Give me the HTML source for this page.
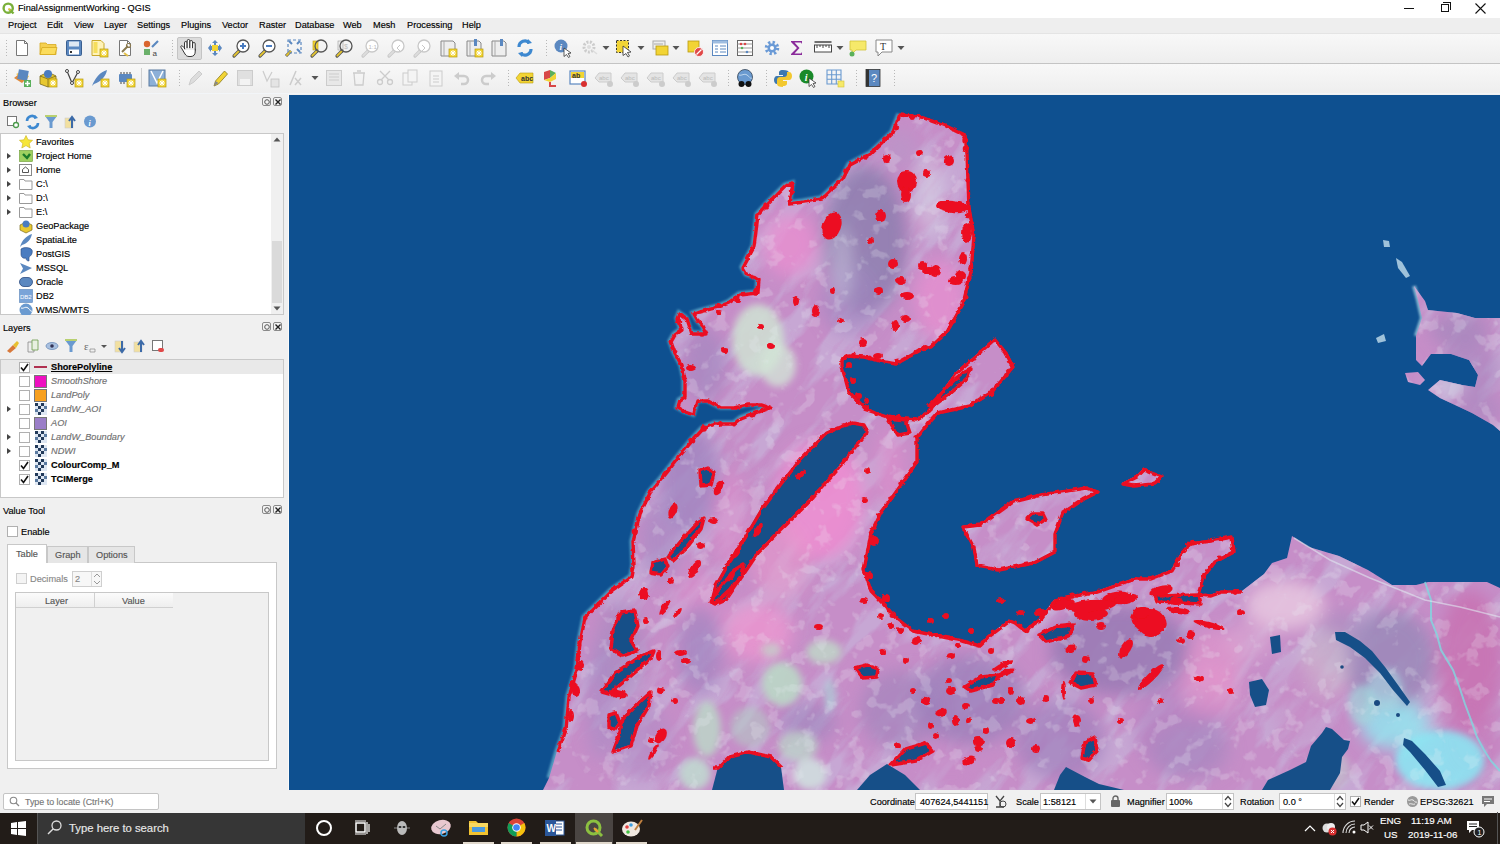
<!DOCTYPE html><html><head><meta charset="utf-8"><style>
*{margin:0;padding:0;box-sizing:border-box}
html,body{width:1500px;height:844px;overflow:hidden;background:#f0f0f0;font-family:"Liberation Sans",sans-serif;font-size:9.2px;color:#000;position:relative}
.a{position:absolute}
.ic{position:absolute;overflow:visible}
.t{position:absolute;white-space:nowrap;font-size:9.2px;line-height:11px;-webkit-text-stroke:0.15px currentColor}
.grip{position:absolute;width:3px;height:18px;background-image:radial-gradient(#b8b8b8 0.6px,transparent 0.7px);background-size:3px 3px}
#title{left:0;top:0;width:1500px;height:18px;background:#fff}
#menu{left:0;top:18px;width:1500px;height:15px;background:#eeeeee}
#tb1{left:0;top:33px;width:1500px;height:30px;background:linear-gradient(#f8f8f8,#eeeeee);border-top:1px solid #e4e4e4}
#tb2{left:0;top:63px;width:1500px;height:31px;background:linear-gradient(#f8f8f8,#eeeeee);border-top:1px solid #c4c4c4;border-bottom:1px solid #f2f5f8}
#map{left:289px;top:95px;width:1211px;height:695px;background:#0f4f8d;overflow:hidden}
#taskbar{left:0;top:813px;width:1500px;height:31px;background:#221c18}
.box{position:absolute;background:#fff;border:1px solid #c8c8c8}
.cb{position:absolute;width:11px;height:11px;background:#fff;border:1px solid #b0b0b0}
.dockbtn{position:absolute;width:9px;height:9px;border:1px solid #8a8a8a;border-radius:2px;background:#f4f4f4}
.arrow{position:absolute;width:0;height:0;border-top:3.5px solid transparent;border-bottom:3.5px solid transparent;border-left:4px solid #444}
</style></head><body><div id="title" class="a"><svg class="ic" style="left:2px;top:2px" width="13" height="13" viewBox="0 0 13 13"><circle cx="6.2" cy="6.2" r="4.6" fill="none" stroke="#7ab03a" stroke-width="2.4"/><path d="M7 7l4.5 4.5" stroke="#7ab03a" stroke-width="2.4"/><path d="M6.5 6.5l2 2" stroke="#e8c030" stroke-width="1.5"/></svg><span class="t" style="left:18px;top:3px">FinalAssignmentWorking - QGIS</span><div class="a" style="left:1404px;top:8px;width:10px;height:1px;background:#111"></div><div class="a" style="left:1441px;top:4px;width:8px;height:8px;border:1px solid #111;background:#fff"></div><div class="a" style="left:1443px;top:2px;width:8px;height:8px;border-top:1px solid #111;border-right:1px solid #111"></div><svg class="ic" style="left:1475px;top:3px" width="11" height="11"><path d="M0.5 0.5l10 10M10.5 0.5l-10 10" stroke="#111" stroke-width="1.1"/></svg></div><div id="menu" class="a"><span class="t" style="left:8px;top:2px">Project</span><span class="t" style="left:47px;top:2px">Edit</span><span class="t" style="left:74px;top:2px">View</span><span class="t" style="left:104px;top:2px">Layer</span><span class="t" style="left:137px;top:2px">Settings</span><span class="t" style="left:181px;top:2px">Plugins</span><span class="t" style="left:222px;top:2px">Vector</span><span class="t" style="left:259px;top:2px">Raster</span><span class="t" style="left:295px;top:2px">Database</span><span class="t" style="left:343px;top:2px">Web</span><span class="t" style="left:373px;top:2px">Mesh</span><span class="t" style="left:407px;top:2px">Processing</span><span class="t" style="left:462px;top:2px">Help</span></div><div id="tb1" class="a"></div><div id="tb2" class="a"></div><div class="a" style="left:177px;top:37px;width:25px;height:23px;background:#dcdcdc;border:1px solid #c4c4c4;border-radius:2px"></div><svg class="ic" style="left:12.0px;top:38.0px" width="20" height="20" viewBox="0 0 20 20"><path d="M4.5 2.5h8l3 3v12h-11z" fill="#fff" stroke="#777"/><path d="M12.5 2.5v3h3" fill="none" stroke="#777"/></svg><svg class="ic" style="left:38.0px;top:38.0px" width="20" height="20" viewBox="0 0 20 20"><path d="M2 5h6l1.5 1.5H18v10H2z" fill="#f5d050" stroke="#d6a920" stroke-width="0.8"/><path d="M2 16.5l2-7h15l-2 7z" fill="#fbdc5c" stroke="#d6a920" stroke-width="0.8"/></svg><svg class="ic" style="left:64.0px;top:38.0px" width="20" height="20" viewBox="0 0 20 20"><rect x="2.5" y="2.5" width="15" height="15" rx="1" fill="#5b88c0" stroke="#3a5f90"/><rect x="5" y="3.5" width="10" height="5" fill="#dfe8f2"/><rect x="5" y="11.5" width="10" height="5" fill="#fff"/><rect x="6" y="13" width="2" height="2" fill="#333"/></svg><svg class="ic" style="left:89.0px;top:38.0px" width="20" height="20" viewBox="0 0 20 20"><path d="M3 2.5h9l3 3v12H3z" fill="#fff3b8" stroke="#c9a82a"/><rect x="4.5" y="4" width="4" height="11" fill="#f2d434" opacity=".7"/><rect x="11" y="11" width="8" height="8" fill="#f2d434" stroke="#b89a10" stroke-width="0.7"/><path d="M15 12.2v5.6M12.2 15h5.6M13 13l4 4M17 13l-4 4" stroke="#fff" stroke-width="1"/></svg><svg class="ic" style="left:115.0px;top:38.0px" width="20" height="20" viewBox="0 0 20 20"><path d="M4.5 2.5h8l3 3v12h-11z" fill="#fff" stroke="#777"/><path d="M12.5 2.5v3h3" fill="none" stroke="#777"/><path d="M7 14l6-6" stroke="#8a7a50" stroke-width="2"/><circle cx="13.5" cy="7.5" r="2" fill="none" stroke="#8a7a50" stroke-width="1.2"/><path d="M9 15l4 3" stroke="#e3c04a" stroke-width="2"/></svg><svg class="ic" style="left:141.0px;top:38.0px" width="20" height="20" viewBox="0 0 20 20"><circle cx="6" cy="6" r="3.2" fill="#d9652f"/><path d="M11 9l6-6" stroke="#5b88c0" stroke-width="2.2"/><rect x="3" y="11" width="6" height="6" fill="#6ab06a"/><text x="11.5" y="17.5" font-size="8" fill="#444" font-family="Liberation Sans">a</text></svg><svg class="ic" style="left:179.0px;top:38.0px" width="20" height="20" viewBox="0 0 20 20"><g fill="#fff" stroke="#222" stroke-width="0.9"><rect x="5.5" y="3.5" width="2.6" height="9" rx="1.3"/><rect x="8.2" y="1.5" width="2.6" height="10" rx="1.3"/><rect x="10.9" y="2.5" width="2.6" height="10" rx="1.3"/><rect x="13.6" y="4.5" width="2.6" height="9" rx="1.3"/><path d="M5.5 10l-2-2c-1-.8-2.2.3-1.5 1.3L6 16c1 1.5 2 2.5 4 2.5h2c2.5 0 4.2-2 4.2-4.5V11H5.5z"/></g><path d="M6.2 11h9.3" stroke="#fff" stroke-width="1.6"/></svg><svg class="ic" style="left:205.0px;top:38.0px" width="20" height="20" viewBox="0 0 20 20"><path d="M10 2l3 3h-2v3h3V6l3 4-3 4v-2h-3v3h2l-3 3-3-3h2v-3H6v2l-3-4 3-4v2h3V5H7z" fill="#5b88c0"/><rect x="7" y="7" width="6" height="6" fill="#f2d434"/></svg><svg class="ic" style="left:231.0px;top:38.0px" width="20" height="20" viewBox="0 0 20 20"><path d="M3 18l5-5" stroke="#555" stroke-width="3.2" stroke-linecap="round"/><path d="M3.3 17.7l4.5-4.5" stroke="#e8c830" stroke-width="1.8" stroke-linecap="round"/><circle cx="12" cy="8" r="6" fill="#fff" stroke="#555" stroke-width="1.3"/><path d="M9 8h6M12 5v6" stroke="#4a7cc0" stroke-width="2"/></svg><svg class="ic" style="left:257.0px;top:38.0px" width="20" height="20" viewBox="0 0 20 20"><path d="M3 18l5-5" stroke="#555" stroke-width="3.2" stroke-linecap="round"/><path d="M3.3 17.7l4.5-4.5" stroke="#e8c830" stroke-width="1.8" stroke-linecap="round"/><circle cx="12" cy="8" r="6" fill="#fff" stroke="#555" stroke-width="1.3"/><path d="M9 8h6" stroke="#4a7cc0" stroke-width="2"/></svg><svg class="ic" style="left:283.0px;top:38.0px" width="20" height="20" viewBox="0 0 20 20"><path d="M3 18l5-5" stroke="#555" stroke-width="3"/><path d="M3.3 17.7l4.5-4.5" stroke="#e8c830" stroke-width="1.8"/><rect x="5" y="2" width="13" height="13" fill="none" stroke="#5b88c0" stroke-width="1.2" stroke-dasharray="3 2"/><path d="M6 3l3 3M17 3l-3 3M17 14l-3-3" stroke="#5b88c0" stroke-width="2"/></svg><svg class="ic" style="left:309.0px;top:38.0px" width="20" height="20" viewBox="0 0 20 20"><rect x="4" y="3" width="5" height="9" fill="#f2d434" stroke="#b89a10" stroke-width=".6"/><path d="M3 18l5-5" stroke="#555" stroke-width="3.2" stroke-linecap="round"/><path d="M3.3 17.7l4.5-4.5" stroke="#e8c830" stroke-width="1.8" stroke-linecap="round"/><circle cx="12" cy="8" r="6" fill="none" stroke="#555" stroke-width="1.3"/></svg><svg class="ic" style="left:334.0px;top:38.0px" width="20" height="20" viewBox="0 0 20 20"><rect x="4" y="3" width="5" height="9" fill="#eee" stroke="#999" stroke-width=".6"/><path d="M3 18l5-5" stroke="#555" stroke-width="3.2" stroke-linecap="round"/><path d="M3.3 17.7l4.5-4.5" stroke="#e8c830" stroke-width="1.8" stroke-linecap="round"/><circle cx="12" cy="8" r="6" fill="none" stroke="#555" stroke-width="1.3"/><text x="10" y="11" font-size="7" fill="#bbb">$</text></svg><svg class="ic" style="left:360.0px;top:38.0px" width="20" height="20" viewBox="0 0 20 20"><path d="M3 18l5-5" stroke="#c8c8c8" stroke-width="3.2" stroke-linecap="round"/><path d="M3.3 17.7l4.5-4.5" stroke="#ddd" stroke-width="1.8" stroke-linecap="round"/><circle cx="12" cy="8" r="6" fill="#fff" stroke="#c8c8c8" stroke-width="1.3"/><text x="8.5" y="10.5" font-size="6" fill="#bbb" font-family="Liberation Sans">1:1</text></svg><svg class="ic" style="left:386.0px;top:38.0px" width="20" height="20" viewBox="0 0 20 20"><path d="M3 18l5-5" stroke="#c8c8c8" stroke-width="3.2" stroke-linecap="round"/><path d="M3.3 17.7l4.5-4.5" stroke="#ddd" stroke-width="1.8" stroke-linecap="round"/><circle cx="12" cy="8" r="6" fill="#fff" stroke="#c8c8c8" stroke-width="1.3"/><path d="M14 7l-3 3 3 3" stroke="#c8c8c8" fill="none"/></svg><svg class="ic" style="left:412.0px;top:38.0px" width="20" height="20" viewBox="0 0 20 20"><path d="M3 18l5-5" stroke="#c8c8c8" stroke-width="3.2" stroke-linecap="round"/><path d="M3.3 17.7l4.5-4.5" stroke="#ddd" stroke-width="1.8" stroke-linecap="round"/><circle cx="12" cy="8" r="6" fill="#fff" stroke="#c8c8c8" stroke-width="1.3"/><path d="M10 7l3 3-3 3" stroke="#c8c8c8" fill="none"/></svg><svg class="ic" style="left:438.0px;top:38.0px" width="20" height="20" viewBox="0 0 20 20"><path d="M3 3h12l2 2v13H3z" fill="#eee" stroke="#888"/><path d="M6 3v15" stroke="#aaa"/><rect x="11" y="11" width="8" height="8" fill="#f2d434" stroke="#b89a10" stroke-width="0.7"/><path d="M15 12.2v5.6M12.2 15h5.6M13 13l4 4M17 13l-4 4" stroke="#fff" stroke-width="1"/></svg><svg class="ic" style="left:464.0px;top:38.0px" width="20" height="20" viewBox="0 0 20 20"><path d="M3 3h12l2 2v13H3z" fill="#eee" stroke="#888"/><path d="M6 3v15" stroke="#aaa"/><rect x="10" y="1" width="3" height="7" fill="#5b88c0"/><rect x="11" y="11" width="8" height="8" fill="#f2d434" stroke="#b89a10" stroke-width="0.7"/><path d="M15 12.2v5.6M12.2 15h5.6M13 13l4 4M17 13l-4 4" stroke="#fff" stroke-width="1"/></svg><svg class="ic" style="left:489.0px;top:38.0px" width="20" height="20" viewBox="0 0 20 20"><path d="M3 3h12l2 2v13H3z" fill="#eee" stroke="#888"/><path d="M6 3v15" stroke="#aaa"/><rect x="11" y="1" width="3" height="7" fill="#5b88c0"/></svg><svg class="ic" style="left:515.0px;top:38.0px" width="20" height="20" viewBox="0 0 20 20"><path d="M4 9a6 6 0 0 1 10.5-4" stroke="#3d88d0" stroke-width="3.2" fill="none"/><path d="M13 1l4 4-5 1z" fill="#3d88d0"/><path d="M16 11a6 6 0 0 1-10.5 4" stroke="#3d88d0" stroke-width="3.2" fill="none"/><path d="M7 19l-4-4 5-1z" fill="#3d88d0"/></svg><svg class="ic" style="left:553.0px;top:38.0px" width="20" height="20" viewBox="0 0 20 20"><circle cx="8" cy="8" r="6.5" fill="#5b88c0"/><text x="6.4" y="12" font-size="9" font-style="italic" font-weight="bold" fill="#fff" font-family="Liberation Serif">i</text><path d="M11 10l7 5-3 .5 2 3-1.5 1-2-3-2.5 2z" fill="#fff" stroke="#333" stroke-width=".8"/></svg><svg class="ic" style="left:580.0px;top:38.0px" width="20" height="20" viewBox="0 0 20 20"><circle cx="9" cy="9" r="5" fill="none" stroke="#ccc" stroke-width="3" stroke-dasharray="2 1.4"/><circle cx="9" cy="9" r="2" fill="#ddd"/><path d="M12 12l5 4" stroke="#ddd" stroke-width="1.5"/></svg><svg class="ic" style="left:614.0px;top:38.0px" width="20" height="20" viewBox="0 0 20 20"><rect x="2.5" y="2.5" width="12" height="12" fill="#f2d434" stroke="#333" stroke-width="1" stroke-dasharray="2 1.5"/><path d="M9 8l8 6-3.5.5 2 3.5-1.5 1-2-3.5-3 2z" fill="#fff" stroke="#333" stroke-width=".8"/></svg><svg class="ic" style="left:650.0px;top:38.0px" width="20" height="20" viewBox="0 0 20 20"><rect x="3" y="3" width="12" height="8" fill="#eee" stroke="#aaa"/><rect x="6" y="8" width="12" height="9" fill="#f2d434" stroke="#b89a10" stroke-width=".8"/><path d="M4 6h9" stroke="#aaa"/></svg><svg class="ic" style="left:685.0px;top:38.0px" width="20" height="20" viewBox="0 0 20 20"><rect x="3" y="3" width="11" height="11" fill="#f2d434" stroke="#b89a10" stroke-width=".8"/><circle cx="14" cy="14" r="4.5" fill="#e04848" stroke="#fff" stroke-width=".8"/><path d="M11.5 16.5l5-5" stroke="#fff" stroke-width="1.3"/></svg><svg class="ic" style="left:710.0px;top:38.0px" width="20" height="20" viewBox="0 0 20 20"><rect x="2.5" y="2.5" width="15" height="15" fill="#fff" stroke="#5b88c0"/><rect x="2.5" y="2.5" width="15" height="3" fill="#9fbde0"/><path d="M5 8h3M10 8h6M5 11h3M10 11h6M5 14h3M10 14h6" stroke="#5b88c0"/></svg><svg class="ic" style="left:735.0px;top:38.0px" width="20" height="20" viewBox="0 0 20 20"><rect x="2.5" y="2.5" width="15" height="15" fill="#fff" stroke="#666"/><path d="M2.5 6h15M2.5 10h15M2.5 14h15" stroke="#999"/><circle cx="6" cy="6" r="1.3" fill="#d84848"/><circle cx="10" cy="6" r="1.3" fill="#d84848"/><circle cx="7" cy="10" r="1.3" fill="#5bb05b"/><circle cx="12" cy="14" r="1.3" fill="#5b88c0"/></svg><svg class="ic" style="left:762.0px;top:38.0px" width="20" height="20" viewBox="0 0 20 20"><circle cx="10" cy="10" r="5.5" fill="none" stroke="#6a9ad6" stroke-width="3.5" stroke-dasharray="2.2 2.1"/><circle cx="10" cy="10" r="4.5" fill="#6a9ad6"/><circle cx="10" cy="10" r="2" fill="#fff"/></svg><svg class="ic" style="left:787.0px;top:38.0px" width="20" height="20" viewBox="0 0 20 20"><path d="M4 3h11v3l-1-1.5H7.5l5 5.5-5 5.5H14l1-1.5v3H4v-1l6-6-6-6z" fill="#8a2a9a"/></svg><svg class="ic" style="left:813.0px;top:38.0px" width="20" height="20" viewBox="0 0 20 20"><rect x="1.5" y="7" width="17" height="7" fill="#fff" stroke="#444"/><path d="M4 7v3M7 7v2M10 7v3M13 7v2M16 7v3" stroke="#444"/><path d="M1.5 4h17" stroke="#444" stroke-width="1.5"/></svg><svg class="ic" style="left:848.0px;top:38.0px" width="20" height="20" viewBox="0 0 20 20"><path d="M2 3h16v9H8l-4 4v-4H2z" fill="#f6e96a" stroke="#d2c33a" stroke-width=".8"/><circle cx="4" cy="16" r="2.5" fill="#5bb05b"/></svg><svg class="ic" style="left:874.0px;top:38.0px" width="20" height="20" viewBox="0 0 20 20"><path d="M2 2h16v12H8l-4 4v-4H2z" fill="#fff" stroke="#888"/><text x="6" y="11.5" font-size="10" fill="#333" font-family="Liberation Serif">T</text></svg><svg class="ic" style="left:602px;top:45px" width="8" height="6"><path d="M0.5 1h7l-3.5 4z" fill="#555"/></svg><svg class="ic" style="left:637px;top:45px" width="8" height="6"><path d="M0.5 1h7l-3.5 4z" fill="#555"/></svg><svg class="ic" style="left:672px;top:45px" width="8" height="6"><path d="M0.5 1h7l-3.5 4z" fill="#555"/></svg><svg class="ic" style="left:836px;top:45px" width="8" height="6"><path d="M0.5 1h7l-3.5 4z" fill="#555"/></svg><svg class="ic" style="left:897px;top:45px" width="8" height="6"><path d="M0.5 1h7l-3.5 4z" fill="#555"/></svg><div class="grip" style="left:5px;top:39px"></div><div class="grip" style="left:171px;top:39px"></div><div class="grip" style="left:545px;top:39px"></div><svg class="ic" style="left:12.0px;top:68.0px" width="20" height="20" viewBox="0 0 20 20"><path d="M2 10l5-4 8 4-5 5z" fill="#e08a3a"/><path d="M4 6l5-2 8 4-3 5z" fill="#f2c14a"/><rect x="6" y="2" width="10" height="10" fill="#5b88c0" transform="rotate(10 11 7)"/><rect x="12" y="12" width="7" height="7" fill="#5bb05b"/><path d="M15.5 13v5M13 15.5h5" stroke="#fff" stroke-width="1.5"/></svg><svg class="ic" style="left:38.0px;top:68.0px" width="20" height="20" viewBox="0 0 20 20"><path d="M2 8l8-4 8 4v8l-8 3-8-3z" fill="#e8c830" stroke="#7a6a20" stroke-width=".8"/><path d="M2 8l8 3 8-3M10 11v8" stroke="#7a6a20" stroke-width=".8" fill="none"/><circle cx="10" cy="6" r="4" fill="#4a7cc0"/><rect x="11" y="11" width="8" height="8" fill="#f2d434" stroke="#b89a10" stroke-width="0.7"/><path d="M15 12.2v5.6M12.2 15h5.6M13 13l4 4M17 13l-4 4" stroke="#fff" stroke-width="1"/></svg><svg class="ic" style="left:64.0px;top:68.0px" width="20" height="20" viewBox="0 0 20 20"><path d="M3 3l5 12 6-11" stroke="#444" stroke-width="1.2" fill="none"/><circle cx="3" cy="3" r="1.5" fill="#fff" stroke="#444"/><circle cx="14" cy="4" r="1.5" fill="#fff" stroke="#444"/><circle cx="8" cy="15" r="1.5" fill="#fff" stroke="#444"/><rect x="11" y="11" width="8" height="8" fill="#f2d434" stroke="#b89a10" stroke-width="0.7"/><path d="M15 12.2v5.6M12.2 15h5.6M13 13l4 4M17 13l-4 4" stroke="#fff" stroke-width="1"/></svg><svg class="ic" style="left:90.0px;top:68.0px" width="20" height="20" viewBox="0 0 20 20"><path d="M2 18C5 10 10 4 17 2c-1 6-6 12-13 14" fill="#5b88c0"/><rect x="11" y="11" width="8" height="8" fill="#f2d434" stroke="#b89a10" stroke-width="0.7"/><path d="M15 12.2v5.6M12.2 15h5.6M13 13l4 4M17 13l-4 4" stroke="#fff" stroke-width="1"/></svg><svg class="ic" style="left:116.0px;top:68.0px" width="20" height="20" viewBox="0 0 20 20"><rect x="3" y="6" width="13" height="8" rx="1" fill="#5b88c0"/><path d="M5 4v2M8 4v2M11 4v2M14 4v2M5 14v2M8 14v2" stroke="#444"/><rect x="11" y="11" width="8" height="8" fill="#f2d434" stroke="#b89a10" stroke-width="0.7"/><path d="M15 12.2v5.6M12.2 15h5.6M13 13l4 4M17 13l-4 4" stroke="#fff" stroke-width="1"/></svg><svg class="ic" style="left:147.0px;top:68.0px" width="20" height="20" viewBox="0 0 20 20"><rect x="2" y="2" width="16" height="16" fill="#8cb0d8" stroke="#5b7aa0"/><path d="M4 3l6 12 6-12" stroke="#fff" stroke-width="1.5" fill="none"/><rect x="11" y="11" width="8" height="8" fill="#f2d434" stroke="#b89a10" stroke-width="0.7"/><path d="M15 12.2v5.6M12.2 15h5.6M13 13l4 4M17 13l-4 4" stroke="#fff" stroke-width="1"/></svg><svg class="ic" style="left:185.0px;top:68.0px" width="20" height="20" viewBox="0 0 20 20"><path d="M4 17l2-6 8-8 3 3-8 8z" fill="#ddd" stroke="#ccc"/></svg><svg class="ic" style="left:210.0px;top:68.0px" width="20" height="20" viewBox="0 0 20 20"><path d="M4 18l1.5-5 9-10 3 3-9 10z" fill="#f2d434" stroke="#8a7a20" stroke-width=".8"/><path d="M4 18l1.5-5 3 2z" fill="#888"/></svg><svg class="ic" style="left:235.0px;top:68.0px" width="20" height="20" viewBox="0 0 20 20"><rect x="2.5" y="2.5" width="15" height="15" fill="#e0e0e0" stroke="#ccc"/><rect x="5" y="11" width="10" height="6" fill="#f3f3f3"/></svg><svg class="ic" style="left:260.0px;top:68.0px" width="20" height="20" viewBox="0 0 20 20"><path d="M3 3l4 10 5-9" stroke="#ccc" stroke-width="1.2" fill="none"/><rect x="11" y="11" width="8" height="8" fill="#e4e4e4" stroke="#bbb" stroke-width="0.7"/></svg><svg class="ic" style="left:287.0px;top:68.0px" width="20" height="20" viewBox="0 0 20 20"><path d="M3 17l6-14M8 10l6 7M14 10l-6 7" stroke="#ccc" stroke-width="1.5"/></svg><svg class="ic" style="left:324.0px;top:68.0px" width="20" height="20" viewBox="0 0 20 20"><rect x="2.5" y="2.5" width="15" height="15" fill="#e8e8e8" stroke="#ccc"/><path d="M5 6h10M5 9h10M5 12h10" stroke="#ccc"/></svg><svg class="ic" style="left:349.0px;top:68.0px" width="20" height="20" viewBox="0 0 20 20"><path d="M4 5h12M8 3h4M5 5l1 12h8l1-12" fill="none" stroke="#ccc" stroke-width="1.3"/></svg><svg class="ic" style="left:375.0px;top:68.0px" width="20" height="20" viewBox="0 0 20 20"><circle cx="5" cy="14" r="2.5" fill="none" stroke="#ccc" stroke-width="1.3"/><circle cx="15" cy="14" r="2.5" fill="none" stroke="#ccc" stroke-width="1.3"/><path d="M6 12l9-9M14 12L5 3" stroke="#ccc" stroke-width="1.3"/></svg><svg class="ic" style="left:400.0px;top:68.0px" width="20" height="20" viewBox="0 0 20 20"><rect x="3" y="5" width="9" height="12" fill="#f4f4f4" stroke="#ccc"/><rect x="8" y="2" width="9" height="12" fill="#f4f4f4" stroke="#ccc"/></svg><svg class="ic" style="left:426.0px;top:68.0px" width="20" height="20" viewBox="0 0 20 20"><rect x="4" y="3" width="12" height="15" fill="#f4f4f4" stroke="#ccc"/><path d="M7 8h6M7 11h6M7 14h6" stroke="#ccc"/></svg><svg class="ic" style="left:452.0px;top:68.0px" width="20" height="20" viewBox="0 0 20 20"><path d="M5 8h7a4 4 0 0 1 0 8H9" stroke="#ccc" stroke-width="2.5" fill="none"/><path d="M2 8l5-4v8z" fill="#ccc"/></svg><svg class="ic" style="left:478.0px;top:68.0px" width="20" height="20" viewBox="0 0 20 20"><path d="M15 8H8a4 4 0 0 0 0 8h3" stroke="#ccc" stroke-width="2.5" fill="none"/><path d="M18 8l-5-4v8z" fill="#ccc"/></svg><svg class="ic" style="left:515.0px;top:68.0px" width="20" height="20" viewBox="0 0 20 20"><path d="M1 10l4-5h13v10H5z" fill="#f2d434" stroke="#b89a10" stroke-width=".6"/><text x="6" y="12.5" font-size="7" font-weight="bold" fill="#333" font-family="Liberation Sans">abc</text></svg><svg class="ic" style="left:541.0px;top:68.0px" width="20" height="20" viewBox="0 0 20 20"><path d="M3 4l6-2 0 8-6 2z" fill="#d84848"/><path d="M9 2l6 3-6 5z" fill="#5bb05b"/><path d="M3 12l6-2 6-5v6l-6 3z" fill="#f2d434"/><path d="M9 14v4h6" stroke="#d84848" stroke-width="2" fill="none"/></svg><svg class="ic" style="left:568.0px;top:68.0px" width="20" height="20" viewBox="0 0 20 20"><rect x="2" y="3" width="15" height="13" fill="#fff" stroke="#5b88c0" stroke-width="1.2"/><rect x="3" y="4" width="13" height="6" fill="#f2d434"/><text x="4" y="10" font-size="7" font-weight="bold" fill="#333" font-family="Liberation Sans">ab</text><circle cx="16" cy="16" r="3" fill="#d83030"/></svg><svg class="ic" style="left:594.0px;top:68.0px" width="20" height="20" viewBox="0 0 20 20"><path d="M1 10l4-5h12v9H5z" fill="#e4e4e4" stroke="#ccc"/><text x="5" y="12" font-size="6" fill="#bbb" font-family="Liberation Sans">abc</text><circle cx="16" cy="16" r="3" fill="#ccc"/></svg><svg class="ic" style="left:620.0px;top:68.0px" width="20" height="20" viewBox="0 0 20 20"><path d="M1 10l4-5h12v9H5z" fill="#e4e4e4" stroke="#ccc"/><text x="5" y="12" font-size="6" fill="#bbb" font-family="Liberation Sans">abc</text><circle cx="16" cy="16" r="3" fill="#ccc"/></svg><svg class="ic" style="left:646.0px;top:68.0px" width="20" height="20" viewBox="0 0 20 20"><path d="M1 10l4-5h12v9H5z" fill="#e4e4e4" stroke="#ccc"/><text x="5" y="12" font-size="6" fill="#bbb" font-family="Liberation Sans">abc</text><circle cx="16" cy="16" r="3" fill="#ccc"/></svg><svg class="ic" style="left:672.0px;top:68.0px" width="20" height="20" viewBox="0 0 20 20"><path d="M1 10l4-5h12v9H5z" fill="#e4e4e4" stroke="#ccc"/><text x="5" y="12" font-size="6" fill="#bbb" font-family="Liberation Sans">abc</text><circle cx="16" cy="16" r="3" fill="#ccc"/></svg><svg class="ic" style="left:698.0px;top:68.0px" width="20" height="20" viewBox="0 0 20 20"><path d="M1 10l4-5h12v9H5z" fill="#e4e4e4" stroke="#ccc"/><text x="5" y="12" font-size="6" fill="#bbb" font-family="Liberation Sans">abc</text><circle cx="16" cy="16" r="3" fill="#ccc"/></svg><svg class="ic" style="left:735.0px;top:68.0px" width="20" height="20" viewBox="0 0 20 20"><circle cx="10" cy="9" r="7.5" fill="#6a9ad0" stroke="#345" stroke-width=".8"/><path d="M4 7c3 1 5-2 8 0s3 4 5 3" stroke="#c0d8ee" fill="none"/><circle cx="6.5" cy="16" r="3" fill="#111"/><circle cx="13.5" cy="16" r="3" fill="#111"/></svg><svg class="ic" style="left:773.0px;top:68.0px" width="20" height="20" viewBox="0 0 20 20"><path d="M10 2c-4 0-4 2-4 3v2h4v1H4c-2 0-3 2-3 4s1 4 3 4h2v-2c0-2 1-3 3-3h4c1.5 0 3-1 3-3V5c0-2-2-3-6-3z" fill="#3c78b0"/><path d="M10 18c4 0 4-2 4-3v-2h-4v-1h6c2 0 3-2 3-4s-1-4-3-4h-2v2c0 2-1 3-3 3H7c-1.5 0-3 1-3 3v4c0 2 2 3 6 3z" fill="#f2c830"/></svg><svg class="ic" style="left:798.0px;top:68.0px" width="20" height="20" viewBox="0 0 20 20"><circle cx="8.5" cy="8.5" r="7" fill="#1a8a2a"/><text x="6.7" y="13" font-size="10" font-style="italic" font-weight="bold" fill="#fff" font-family="Liberation Serif">i</text><path d="M11 10l7 5-3 .5 2 3-1.5 1-2-3-2.5 2z" fill="#fff" stroke="#333" stroke-width=".8"/></svg><svg class="ic" style="left:825.0px;top:68.0px" width="20" height="20" viewBox="0 0 20 20"><path d="M2 2h14v14H2zM2 6.7h14M2 11.3h14M6.7 2v14M11.3 2v14" stroke="#6a9ad0" fill="none" stroke-width="1.1"/><rect x="13" y="13" width="6" height="6" fill="#f6e96a" stroke="#d2c33a" stroke-width=".6"/></svg><svg class="ic" style="left:863.0px;top:68.0px" width="20" height="20" viewBox="0 0 20 20"><rect x="3" y="1.5" width="14" height="17" fill="#5b88c0" stroke="#333" stroke-width=".8"/><rect x="3" y="1.5" width="3" height="17" fill="#333"/><text x="8" y="14" font-size="11" fill="#fff" font-family="Liberation Sans">?</text></svg><svg class="ic" style="left:311px;top:75px" width="8" height="6"><path d="M0.5 1h7l-3.5 4z" fill="#555"/></svg><div class="grip" style="left:5px;top:69px"></div><div class="grip" style="left:178px;top:69px"></div><div class="grip" style="left:507px;top:69px"></div><div class="grip" style="left:727px;top:69px"></div><div class="grip" style="left:765px;top:69px"></div><div class="grip" style="left:855px;top:69px"></div><div class="grip" style="left:893px;top:69px"></div><div class="a" style="left:141px;top:68px;width:1px;height:20px;background:#d0d0d0"></div><div class="a" style="left:0;top:94px;width:289px;height:696px;background:#f0f0f0"></div><div class="a" style="left:288px;top:94px;width:1px;height:696px;background:#fafafa"></div><span class="t" style="left:3px;top:97.5px">Browser</span><div class="dockbtn" style="left:262px;top:97px"></div><svg class="ic" style="left:263px;top:98px" width="8" height="8"><circle cx="4" cy="4" r="2.3" fill="none" stroke="#555" stroke-width="1"/></svg><div class="dockbtn" style="left:273px;top:97px"></div><svg class="ic" style="left:274px;top:98px" width="8" height="8"><path d="M1.5 1.5l5 5M6.5 1.5l-5 5" stroke="#222" stroke-width="1.4"/></svg><svg class="ic" style="left:5px;top:114px" width="100" height="16" viewBox="0 0 100 16"><rect x="2.5" y="2.5" width="9" height="9" fill="#fff" stroke="#777"/><circle cx="11" cy="11" r="2.5" fill="#fff" stroke="#4a9a4a" stroke-width="1.3"/><path d="M22 7a5 5 0 0 1 9-3" stroke="#3d88d0" stroke-width="2.6" fill="none"/><path d="M30 1l3 3-4 1z" fill="#3d88d0"/><path d="M33 9a5 5 0 0 1-9 3" stroke="#3d88d0" stroke-width="2.6" fill="none"/><path d="M25 15l-3-3 4-1z" fill="#3d88d0"/><path d="M40 2h12l-4.5 6v6h-3V8z" fill="#6a9ad0"/><path d="M40 2h12" stroke="#b8d070" stroke-width="2"/><rect x="60" y="4" width="8" height="10" fill="#f2e0a0" stroke="#ccc" stroke-width=".6"/><path d="M67 14V4M64 7l3-4 3 4" stroke="#3c6aa8" stroke-width="2" fill="none"/><circle cx="85" cy="7.5" r="6" fill="#6a9ad0"/><text x="83.6" y="11.5" font-size="8" font-style="italic" font-weight="bold" fill="#fff" font-family="Liberation Serif">i</text></svg><div class="box" style="left:0px;top:133px;width:284px;height:182px"></div><div class="a" style="left:271px;top:134px;width:12px;height:180px;background:#f0f0f0"></div><div class="a" style="left:272px;top:241px;width:10px;height:62px;background:#dadada"></div><svg class="ic" style="left:273px;top:137px" width="8" height="5"><path d="M0.5 4.5l3.5-4 3.5 4z" fill="#555"/></svg><svg class="ic" style="left:273px;top:306px" width="8" height="5"><path d="M0.5 .5l3.5 4 3.5-4z" fill="#555"/></svg><svg class="ic" style="left:19px;top:135px" width="14" height="14" viewBox="0 0 14 14"><path d="M7 0.5l2 4.3 4.6.5-3.4 3.1 1 4.6L7 10.6 2.8 13l1-4.6L.4 5.3 5 4.8z" fill="#f6e63a" stroke="#c8b020" stroke-width=".6"/></svg><span class="t" style="left:36px;top:136.5px">Favorites</span><div class="arrow" style="left:7px;top:152.5px"></div><svg class="ic" style="left:19px;top:149px" width="14" height="14" viewBox="0 0 14 14"><rect x=".5" y="1.5" width="13" height="11" fill="#9ed060" stroke="#6a9a30" stroke-width=".6"/><path d="M4 5l4 4 3-4" stroke="#1a7a2a" stroke-width="2.4" fill="none"/></svg><span class="t" style="left:36px;top:150.5px">Project Home</span><div class="arrow" style="left:7px;top:166.5px"></div><svg class="ic" style="left:19px;top:163px" width="14" height="14" viewBox="0 0 14 14"><rect x=".5" y="1.5" width="12" height="11" fill="#fff" stroke="#888"/><path d="M3.5 9.5v-3l3-2.5 3 2.5v3z" fill="none" stroke="#555"/></svg><span class="t" style="left:36px;top:164.5px">Home</span><div class="arrow" style="left:7px;top:180.5px"></div><svg class="ic" style="left:19px;top:177px" width="14" height="14" viewBox="0 0 14 14"><path d="M.5 2.5h4.5l1 1.5H13v8.5H.5z" fill="#fff" stroke="#999"/></svg><span class="t" style="left:36px;top:178.5px">C:\</span><div class="arrow" style="left:7px;top:194.5px"></div><svg class="ic" style="left:19px;top:191px" width="14" height="14" viewBox="0 0 14 14"><path d="M.5 2.5h4.5l1 1.5H13v8.5H.5z" fill="#fff" stroke="#999"/></svg><span class="t" style="left:36px;top:192.5px">D:\</span><div class="arrow" style="left:7px;top:208.5px"></div><svg class="ic" style="left:19px;top:205px" width="14" height="14" viewBox="0 0 14 14"><path d="M.5 2.5h4.5l1 1.5H13v8.5H.5z" fill="#fff" stroke="#999"/></svg><span class="t" style="left:36px;top:206.5px">E:\</span><svg class="ic" style="left:19px;top:219px" width="14" height="14" viewBox="0 0 14 14"><path d="M1 6l6-3 6 3v5l-6 3-6-3z" fill="#e8c830" stroke="#7a6a20" stroke-width=".7"/><circle cx="7" cy="5" r="3.5" fill="#4a7cc0"/></svg><span class="t" style="left:36px;top:220.5px">GeoPackage</span><svg class="ic" style="left:19px;top:233px" width="14" height="14" viewBox="0 0 14 14"><path d="M1 14C3 7 7 3 13 1c-1 5-4 9-10 11" fill="#5b88c0"/></svg><span class="t" style="left:36px;top:234.5px">SpatiaLite</span><svg class="ic" style="left:19px;top:247px" width="14" height="14" viewBox="0 0 14 14"><path d="M2 2c3-2 9-2 11 1 1 3-1 6-3 7v4c-2 0-3-1-3-3-3 1-5-1-5-4z" fill="#4a7cc0" stroke="#2a4a80" stroke-width=".6"/></svg><span class="t" style="left:36px;top:248.5px">PostGIS</span><svg class="ic" style="left:19px;top:261px" width="14" height="14" viewBox="0 0 14 14"><path d="M1 2l12 5-12 6 3-5.5z" fill="#5b88c0"/></svg><span class="t" style="left:36px;top:262.5px">MSSQL</span><svg class="ic" style="left:19px;top:275px" width="14" height="14" viewBox="0 0 14 14"><rect x=".5" y="2.5" width="13" height="9" rx="4.5" fill="#5b88c0" stroke="#2a4a80" stroke-width=".8"/></svg><span class="t" style="left:36px;top:276.5px">Oracle</span><svg class="ic" style="left:19px;top:289px" width="14" height="14" viewBox="0 0 14 14"><rect x=".5" y=".5" width="13" height="13" fill="#7aa4d8" stroke="#5a84b8" stroke-width=".6"/><text x="1" y="9.5" font-size="6" fill="#fff" font-family="Liberation Sans">DB2</text></svg><span class="t" style="left:36px;top:290.5px">DB2</span><svg class="ic" style="left:19px;top:303px" width="14" height="14" viewBox="0 0 14 14"><circle cx="7" cy="7" r="6.5" fill="#6a9ad0"/><path d="M2 5c3 1 4-2 7 0s2 4 4 3" stroke="#fff" fill="none"/></svg><span class="t" style="left:36px;top:304.5px">WMS/WMTS</span><div class="a" style="left:0;top:315px;width:288px;height:3px;background:#f0f0f0"></div><span class="t" style="left:3px;top:322.5px">Layers</span><div class="dockbtn" style="left:262px;top:322px"></div><svg class="ic" style="left:263px;top:323px" width="8" height="8"><circle cx="4" cy="4" r="2.3" fill="none" stroke="#555" stroke-width="1"/></svg><div class="dockbtn" style="left:273px;top:322px"></div><svg class="ic" style="left:274px;top:323px" width="8" height="8"><path d="M1.5 1.5l5 5M6.5 1.5l-5 5" stroke="#222" stroke-width="1.4"/></svg><svg class="ic" style="left:4px;top:338px" width="170" height="16" viewBox="0 0 170 16"><path d="M3 13l6-6 3 3-6 5z" fill="#d8783a"/><path d="M9 7l4-4 2 2-3 5z" fill="#e8c030"/><path d="M24 4h6v10h-6z" fill="#eee" stroke="#888" stroke-width=".8"/><path d="M28 2h6v10h-6z" fill="#e8f0e0" stroke="#6a9a4a" stroke-width=".8"/><ellipse cx="48" cy="8" rx="6" ry="3.5" fill="#a8c0e0" stroke="#6a8ab8" stroke-width=".8"/><circle cx="48" cy="8" r="1.8" fill="#335"/><path d="M61 2h12l-4.5 6v6h-3V8z" fill="#6a9ad0"/><path d="M61 2h12" stroke="#b8d070" stroke-width="2"/><text x="80" y="12" font-size="11" fill="#666" font-family="Liberation Serif">ε</text><path d="M86 11h5v3h-5z" fill="none" stroke="#888" stroke-width=".7"/><path d="M97 7h6l-3 3z" fill="#555"/><rect x="111" y="3" width="8" height="11" fill="#f2e0a0" stroke="#ccc" stroke-width=".6"/><path d="M118 3v10M115 10l3 4 3-4" stroke="#3c6aa8" stroke-width="2" fill="none"/><rect x="130" y="4" width="8" height="10" fill="#f2e0a0" stroke="#ccc" stroke-width=".6"/><path d="M137 14V4M134 7l3-4 3 4" stroke="#3c6aa8" stroke-width="2" fill="none"/><rect x="148.5" y="2.5" width="10" height="10" fill="#fff" stroke="#777"/><rect x="154" y="10" width="6" height="4" rx="2" fill="#e04848"/></svg><div class="box" style="left:0px;top:359px;width:284px;height:139px"></div><div class="a" style="left:1px;top:360px;width:282px;height:14px;background:#e9e9e9"></div><div class="cb" style="left:19px;top:362px"></div><svg class="ic" style="left:20px;top:363px" width="9" height="9"><path d="M1 4.5l2.5 3L8 1" stroke="#111" stroke-width="1.6" fill="none"/></svg><div class="a" style="left:34px;top:366px;width:13px;height:2px;background:#b03050"></div><span class="t" style="left:51px;top:361.5px;font-weight:bold;text-decoration:underline">ShorePolyline</span><div class="cb" style="left:19px;top:376px"></div><div class="a" style="left:34px;top:375px;width:13px;height:13px;background:#ee10c0;border:1px solid #777"></div><span class="t" style="left:51px;top:375.5px;font-style:italic;color:#707070">SmoothShore</span><div class="cb" style="left:19px;top:390px"></div><div class="a" style="left:34px;top:389px;width:13px;height:13px;background:#f7a020;border:1px solid #777"></div><span class="t" style="left:51px;top:389.5px;font-style:italic;color:#707070">LandPoly</span><div class="arrow" style="left:7px;top:405.5px"></div><div class="cb" style="left:19px;top:404px"></div><svg class="ic" style="left:35px;top:403px" width="12" height="12" viewBox="0 0 12 12"><rect width="12" height="12" fill="#dde6f2"/><rect x="0" y="0" width="3" height="3" fill="#223a5a"/><rect x="6" y="0" width="3" height="3" fill="#223a5a"/><rect x="3" y="3" width="3" height="3" fill="#223a5a"/><rect x="9" y="3" width="3" height="3" fill="#5a7aa0"/><rect x="0" y="6" width="3" height="3" fill="#5a7aa0"/><rect x="6" y="6" width="3" height="3" fill="#223a5a"/><rect x="3" y="9" width="3" height="3" fill="#223a5a"/></svg><span class="t" style="left:51px;top:403.5px;font-style:italic;color:#707070">LandW_AOI</span><div class="cb" style="left:19px;top:418px"></div><div class="a" style="left:34px;top:417px;width:13px;height:13px;background:#9a7ec8;border:1px solid #777"></div><span class="t" style="left:51px;top:417.5px;font-style:italic;color:#707070">AOI</span><div class="arrow" style="left:7px;top:433.5px"></div><div class="cb" style="left:19px;top:432px"></div><svg class="ic" style="left:35px;top:431px" width="12" height="12" viewBox="0 0 12 12"><rect width="12" height="12" fill="#dde6f2"/><rect x="0" y="0" width="3" height="3" fill="#223a5a"/><rect x="6" y="0" width="3" height="3" fill="#223a5a"/><rect x="3" y="3" width="3" height="3" fill="#223a5a"/><rect x="9" y="3" width="3" height="3" fill="#5a7aa0"/><rect x="0" y="6" width="3" height="3" fill="#5a7aa0"/><rect x="6" y="6" width="3" height="3" fill="#223a5a"/><rect x="3" y="9" width="3" height="3" fill="#223a5a"/></svg><span class="t" style="left:51px;top:431.5px;font-style:italic;color:#707070">LandW_Boundary</span><div class="arrow" style="left:7px;top:447.5px"></div><div class="cb" style="left:19px;top:446px"></div><svg class="ic" style="left:35px;top:445px" width="12" height="12" viewBox="0 0 12 12"><rect width="12" height="12" fill="#dde6f2"/><rect x="0" y="0" width="3" height="3" fill="#223a5a"/><rect x="6" y="0" width="3" height="3" fill="#223a5a"/><rect x="3" y="3" width="3" height="3" fill="#223a5a"/><rect x="9" y="3" width="3" height="3" fill="#5a7aa0"/><rect x="0" y="6" width="3" height="3" fill="#5a7aa0"/><rect x="6" y="6" width="3" height="3" fill="#223a5a"/><rect x="3" y="9" width="3" height="3" fill="#223a5a"/></svg><span class="t" style="left:51px;top:445.5px;font-style:italic;color:#707070">NDWI</span><div class="cb" style="left:19px;top:460px"></div><svg class="ic" style="left:20px;top:461px" width="9" height="9"><path d="M1 4.5l2.5 3L8 1" stroke="#111" stroke-width="1.6" fill="none"/></svg><svg class="ic" style="left:35px;top:459px" width="12" height="12" viewBox="0 0 12 12"><rect width="12" height="12" fill="#dde6f2"/><rect x="0" y="0" width="3" height="3" fill="#223a5a"/><rect x="6" y="0" width="3" height="3" fill="#223a5a"/><rect x="3" y="3" width="3" height="3" fill="#223a5a"/><rect x="9" y="3" width="3" height="3" fill="#5a7aa0"/><rect x="0" y="6" width="3" height="3" fill="#5a7aa0"/><rect x="6" y="6" width="3" height="3" fill="#223a5a"/><rect x="3" y="9" width="3" height="3" fill="#223a5a"/></svg><span class="t" style="left:51px;top:459.5px;font-weight:bold">ColourComp_M</span><div class="cb" style="left:19px;top:474px"></div><svg class="ic" style="left:20px;top:475px" width="9" height="9"><path d="M1 4.5l2.5 3L8 1" stroke="#111" stroke-width="1.6" fill="none"/></svg><svg class="ic" style="left:35px;top:473px" width="12" height="12" viewBox="0 0 12 12"><rect width="12" height="12" fill="#dde6f2"/><rect x="0" y="0" width="3" height="3" fill="#223a5a"/><rect x="6" y="0" width="3" height="3" fill="#223a5a"/><rect x="3" y="3" width="3" height="3" fill="#223a5a"/><rect x="9" y="3" width="3" height="3" fill="#5a7aa0"/><rect x="0" y="6" width="3" height="3" fill="#5a7aa0"/><rect x="6" y="6" width="3" height="3" fill="#223a5a"/><rect x="3" y="9" width="3" height="3" fill="#223a5a"/></svg><span class="t" style="left:51px;top:473.5px;font-weight:bold">TCIMerge</span><span class="t" style="left:3px;top:505.5px">Value Tool</span><div class="dockbtn" style="left:262px;top:505px"></div><svg class="ic" style="left:263px;top:506px" width="8" height="8"><circle cx="4" cy="4" r="2.3" fill="none" stroke="#555" stroke-width="1"/></svg><div class="dockbtn" style="left:273px;top:505px"></div><svg class="ic" style="left:274px;top:506px" width="8" height="8"><path d="M1.5 1.5l5 5M6.5 1.5l-5 5" stroke="#222" stroke-width="1.4"/></svg><div class="cb" style="left:7px;top:526px"></div><span class="t" style="left:21px;top:526.5px">Enable</span><div class="a" style="left:7px;top:562px;width:270px;height:207px;background:#fff;border:1px solid #c8c8c8"></div><div class="a" style="left:47px;top:546px;width:41px;height:17px;background:#e6e6e6;border:1px solid #c8c8c8;border-bottom:none"></div><div class="a" style="left:88px;top:546px;width:47px;height:17px;background:#e6e6e6;border:1px solid #c8c8c8;border-bottom:none"></div><div class="a" style="left:7px;top:544px;width:40px;height:19px;background:#fff;border:1px solid #c8c8c8;border-bottom:none"></div><span class="t" style="left:16px;top:549px;color:#555">Table</span><span class="t" style="left:55px;top:549.5px;color:#555">Graph</span><span class="t" style="left:96px;top:549.5px;color:#555">Options</span><div class="cb" style="left:16px;top:573px;border-color:#cfcfcf;background:#f4f4f4"></div><span class="t" style="left:30px;top:573.5px;color:#888">Decimals</span><div class="a" style="left:72px;top:571px;width:30px;height:16px;border:1px solid #cfcfcf;background:#f7f7f7"></div><span class="t" style="left:75px;top:574px;color:#888">2</span><div class="a" style="left:91px;top:572px;width:1px;height:14px;background:#ddd"></div><svg class="ic" style="left:93px;top:573px" width="8" height="12"><path d="M1 4l3-3 3 3M1 8l3 3 3-3" stroke="#999" fill="none"/></svg><div class="a" style="left:15px;top:592px;width:254px;height:169px;background:#f0f0f0;border:1px solid #c8c8c8"></div><div class="a" style="left:16px;top:593px;width:157px;height:15px;background:linear-gradient(#fbfbfb,#eeeeee);border-bottom:1px solid #d0d0d0"></div><div class="a" style="left:94px;top:593px;width:1px;height:15px;background:#d0d0d0"></div><span class="t" style="left:45px;top:595.5px;color:#555">Layer</span><span class="t" style="left:122px;top:595.5px;color:#555">Value</span><div id="map" class="a"><svg width="1211" height="695" viewBox="289 95 1211 695" style="position:absolute;left:0;top:0;display:block">
<defs>
<filter id="b12" x="289" y="95" width="1211" height="695" filterUnits="userSpaceOnUse"><feGaussianBlur stdDeviation="8"/></filter>
<filter id="b4" x="289" y="95" width="1211" height="695" filterUnits="userSpaceOnUse"><feGaussianBlur stdDeviation="3.5"/></filter>
<filter id="disp" x="289" y="95" width="1211" height="695" filterUnits="userSpaceOnUse"><feTurbulence type="turbulence" baseFrequency="0.15" numOctaves="2" seed="3" result="t"/><feDisplacementMap in="SourceGraphic" in2="t" scale="3" xChannelSelector="R" yChannelSelector="G"/></filter>
<filter id="b1" x="-50%" y="-50%" width="200%" height="200%"><feGaussianBlur stdDeviation="1.2"/></filter>
<filter id="tex" x="0" y="-300" width="1800" height="1500" filterUnits="userSpaceOnUse"><feTurbulence type="fractalNoise" baseFrequency="0.012 0.04" numOctaves="4" seed="11"/><feColorMatrix type="matrix" values="0 0 0 0 0.58  0 0 0 0 0.48  0 0 0 0 0.72  5 0 0 0 -2.3"/></filter>
<filter id="tex2" x="289" y="95" width="1211" height="695" filterUnits="userSpaceOnUse"><feTurbulence type="fractalNoise" baseFrequency="0.06" numOctaves="3" seed="4"/><feColorMatrix type="matrix" values="0 0 0 0 0.85  0 0 0 0 0.88  0 0 0 0 0.92  0 9 0 0 -5.2"/></filter>
<clipPath id="lc"><polygon points="543,790 549,778 557,751 565,729 568,696 576,669 579,642 584,617 598,603 611,590 631,576 633,565 632,541 639,513 649,492 664,474 678,456 691,440 702,428 714,423 734,423 740,418 755,412 770,407 761,404 747,404 734,407 720,407 707,400 697,400 693,414 684,411 677,407 679,400 684,397 684,379 681,365 674,352 670,341 674,334 681,329 677,318 679,313 686,318 691,333 706,333 702,325 697,320 693,313 699,311 718,306 728,302 739,294 757,292 758,278 746,274 742,267 753,246 757,214 767,203 785,185 792,183 789,203 803,201 821,198 842,178 849,164 870,153 892,132 899,114 920,116 945,125 964,134 966,153 968,207 973,235 970,271 962,303 946,331 930,346 918,350 895,363 884,361 863,356 848,355 841,359 841,366 848,391 866,409 887,416 916,419 927,412 955,373 976,355 994,339 1005,352 1012,366 991,391 969,405 937,412 927,423 916,437 916,462 898,487 880,512 870,533 863,569 870,590 875,595 895,617 912,630 937,635 962,640 979,645 989,635 1009,620 1014,622 1024,630 1039,620 1054,600 1074,595 1094,592 1114,585 1135,578 1150,578 1171,570 1181,553 1190,543 1210,540 1231,536 1233,551 1214,561 1204,574 1198,594 1210,595 1221,591 1242,591 1264,574 1272,563 1287,558 1292,536 1309,547 1339,556 1368,570 1392,585 1416,585 1428,582 1457,582 1487,582 1500,588 1500,790"/><polygon points="1414,286 1425,301 1428,310 1457,313 1475,318 1500,318 1500,431 1493,425 1472,413 1440,398 1428,390 1440,380 1462,385 1475,387 1478,375 1469,360 1451,354 1431,354 1422,366 1416,360 1416,336 1422,318 1418,300"/><polygon points="962,526 980,524 1012,501 1040,494 1086,487 1097,491 1083,498 1062,512 1054,533 1054,551 1033,562 998,569 976,565 973,547"/><polygon points="1122,483 1136,476 1143,469 1161,476 1154,483 1133,485"/><polygon points="1405,373 1418,372 1425,380 1420,385 1408,382"/></clipPath>
</defs>
<rect x="289" y="95" width="1211" height="695" fill="#0e5090"/>
<polyline points="549,778 557,751 565,729 568,696 576,669 579,642 584,617 598,603 611,590 631,576 633,565 632,541 639,513 649,492 664,474 678,456 691,440 702,428 714,423 734,423 740,418 755,412 770,407 761,404 747,404 734,407 720,407 707,400 697,400 693,414 684,411 677,407 679,400 684,397 684,379 681,365 674,352 670,341 674,334 681,329 677,318 679,313 686,318 691,333 706,333 702,325 697,320 693,313 699,311 718,306 728,302 739,294 757,292 758,278 746,274 742,267 753,246 757,214 767,203 785,185 792,183 789,203 803,201 821,198 842,178 849,164 870,153 892,132 899,114" fill="none" stroke="#8fd8e8" stroke-width="5" opacity="0.55" filter="url(#b1)"/>
<polyline points="1416,336 1422,318 1418,300 1414,286" fill="none" stroke="#b8e0ec" stroke-width="4" opacity="0.7" filter="url(#b1)"/>
<polyline points="1000,655 1020,650 1040,638 1054,640" fill="none" stroke="#8fe0ec" stroke-width="8" opacity="0.6" filter="url(#b1)"/>
<g clip-path="url(#lc)">
<rect x="289" y="95" width="1211" height="695" fill="#c68ec8"/>
<g transform="rotate(-50 900 450)"><rect x="0" y="-300" width="1800" height="1500" filter="url(#tex)" opacity="0.6"/></g>
<g filter="url(#b12)"><ellipse cx="865" cy="240" rx="42" ry="75" fill="#9080b0" opacity="0.9"/><ellipse cx="850" cy="300" rx="30" ry="35" fill="#a086c0" opacity="0.6"/><ellipse cx="842" cy="265" rx="10" ry="38" fill="#d0d0e4" opacity="0.5"/><ellipse cx="930" cy="195" rx="14" ry="40" fill="#d8d8e8" opacity="0.55"/><ellipse cx="790" cy="245" rx="28" ry="32" fill="#ea90d0" opacity="0.75"/><ellipse cx="940" cy="300" rx="26" ry="40" fill="#ea90d0" opacity="0.7"/><ellipse cx="900" cy="150" rx="18" ry="20" fill="#b898c8" opacity="0.6"/><ellipse cx="705" cy="365" rx="22" ry="38" fill="#a888c0" opacity="0.8"/><ellipse cx="690" cy="480" rx="30" ry="55" fill="#a086c0" opacity="0.8"/><ellipse cx="660" cy="540" rx="20" ry="40" fill="#a88cc4" opacity="0.7"/><ellipse cx="730" cy="520" rx="18" ry="50" fill="#e090cc" opacity="0.5"/><ellipse cx="620" cy="650" rx="25" ry="50" fill="#a58ac0" opacity="0.6"/><ellipse cx="640" cy="740" rx="30" ry="40" fill="#b08cc4" opacity="0.6"/><ellipse cx="600" cy="700" rx="15" ry="60" fill="#a88cc4" opacity="0.6"/><ellipse cx="700" cy="600" rx="25" ry="30" fill="#e090cc" opacity="0.5"/><ellipse cx="820" cy="500" rx="45" ry="60" fill="#ec8ed0" opacity="0.9"/><ellipse cx="780" cy="560" rx="30" ry="40" fill="#e898cc" opacity="0.6"/><ellipse cx="890" cy="470" rx="15" ry="40" fill="#e090cc" opacity="0.6"/><ellipse cx="880" cy="560" rx="12" ry="35" fill="#c8b8d8" opacity="0.6"/><ellipse cx="758" cy="632" rx="35" ry="30" fill="#ec96d0" opacity="0.8"/><ellipse cx="700" cy="650" rx="22" ry="45" fill="#a086c0" opacity="0.7"/><ellipse cx="808" cy="722" rx="28" ry="20" fill="#9c84bc" opacity="0.6"/><ellipse cx="900" cy="710" rx="40" ry="40" fill="#a484bc" opacity="0.7"/><ellipse cx="970" cy="700" rx="55" ry="45" fill="#9c80ba" opacity="0.8"/><ellipse cx="950" cy="765" rx="40" ry="22" fill="#c88cc8" opacity="0.6"/><ellipse cx="1060" cy="740" rx="45" ry="40" fill="#a080bc" opacity="0.7"/><ellipse cx="1120" cy="650" rx="70" ry="45" fill="#987ab4" opacity="0.85"/><ellipse cx="1180" cy="730" rx="45" ry="45" fill="#b080c0" opacity="0.6"/><ellipse cx="1215" cy="660" rx="30" ry="30" fill="#e496cc" opacity="0.6"/><ellipse cx="1285" cy="605" rx="40" ry="25" fill="#e8c8e0" opacity="0.85"/><ellipse cx="1250" cy="640" rx="25" ry="20" fill="#dca8d4" opacity="0.6"/><ellipse cx="1390" cy="660" rx="45" ry="50" fill="#9a88b8" opacity="0.85"/><ellipse cx="1340" cy="640" rx="25" ry="30" fill="#a890c0" opacity="0.6"/><ellipse cx="1470" cy="660" rx="32" ry="70" fill="#c870b0" opacity="0.8"/><ellipse cx="1325" cy="665" rx="25" ry="35" fill="#d0c0d0" opacity="0.6"/><ellipse cx="1470" cy="740" rx="30" ry="40" fill="#c878b8" opacity="0.5"/><ellipse cx="1395" cy="725" rx="35" ry="25" fill="#90e8f0" opacity="0.8"/><ellipse cx="1210" cy="690" rx="30" ry="25" fill="#e496cc" opacity="0.6"/><ellipse cx="1300" cy="705" rx="28" ry="40" fill="#c890c8" opacity="0.5"/><ellipse cx="1190" cy="750" rx="40" ry="30" fill="#a888c0" opacity="0.6"/><ellipse cx="1470" cy="370" rx="30" ry="30" fill="#a888c0" opacity="0.6"/><ellipse cx="1460" cy="330" rx="30" ry="18" fill="#a486bc" opacity="0.7"/><ellipse cx="1480" cy="410" rx="25" ry="15" fill="#a888c0" opacity="0.6"/><ellipse cx="1445" cy="385" rx="20" ry="8" fill="#d8e0ec" opacity="0.6"/></g>
<g filter="url(#b4)"><ellipse cx="758" cy="340" rx="26" ry="36" fill="#cfe2d2" opacity="0.85"/><ellipse cx="778" cy="365" rx="18" ry="22" fill="#d2e4d6" opacity="0.8"/><ellipse cx="782" cy="684" rx="20" ry="22" fill="#bcd4c6" opacity="0.95"/><ellipse cx="824" cy="652" rx="18" ry="12" fill="#c0d6c8" opacity="0.85"/><ellipse cx="771" cy="650" rx="10" ry="7" fill="#c0d6c8" opacity="0.7"/><ellipse cx="707" cy="729" rx="14" ry="28" fill="#bcd6c8" opacity="0.85"/><ellipse cx="750" cy="727" rx="20" ry="20" fill="#b4c8c4" opacity="0.6"/><ellipse cx="798" cy="746" rx="20" ry="15" fill="#bcd4c8" opacity="0.75"/><ellipse cx="810" cy="774" rx="17" ry="16" fill="#d0e4e0" opacity="0.85"/><ellipse cx="695" cy="774" rx="16" ry="16" fill="#c0dcd0" opacity="0.85"/><ellipse cx="830" cy="695" rx="6" ry="16" fill="#a8e0dc" opacity="0.6"/><ellipse cx="1440" cy="760" rx="45" ry="30" fill="#88eaf4" opacity="0.85"/><ellipse cx="1385" cy="690" rx="18" ry="22" fill="#a8d8e4" opacity="0.6"/><ellipse cx="1362" cy="705" rx="14" ry="20" fill="#a0e0e0" opacity="0.6"/><ellipse cx="1330" cy="770" rx="20" ry="20" fill="#c0d8d0" opacity="0.5"/></g>
<rect x="289" y="95" width="1211" height="695" filter="url(#tex2)" opacity="0.22"/>
</g>
<g fill="#b9d6e8" opacity="0.85"><polygon points="1383,240 1389,241 1390,247 1384,247"/><polygon points="1396,258 1402,262 1410,276 1406,278 1398,268"/><polygon points="1376,338 1384,334 1386,341 1378,343"/></g>
<g fill="#164f88"><polygon points="840,426 852,422 863,424 867,431 860,440 840,465 812,497 785,524 757,552 740,577 725,599 716,603 711,600 715,585 728,562 743,539 760,510 780,483 800,458 826,432"/><polygon points="620,612 634,610 637,625 630,640 636,650 622,655 610,648 612,630"/><polygon points="601,691 615,672 640,655 653,650 650,658 630,675 608,693"/><polygon points="612,751 618,735 622,718 640,700 650,691 648,705 636,725 630,745"/><polygon points="650,572 652,562 664,558 667,566 660,574"/><polygon points="710,601 720,585 735,568 743,563 741,575 728,590 714,603"/><polygon points="854,667 866,664 877,668 876,676 862,677"/><polygon points="964,686 980,676 999,674 992,684 970,690"/><polygon points="890,764 905,748 925,742 932,750 915,760"/><polygon points="1081,757 1084,742 1094,737 1096,750 1088,759"/><polygon points="1154,595 1156,601 1200,603 1198,594"/><polygon points="1249,682 1262,679 1269,690 1266,705 1255,707 1250,695"/><polygon points="1270,637 1280,635 1281,652 1272,654"/><polygon points="1335,632 1345,632 1360,641 1372,651 1385,667 1398,685 1410,702 1407,706 1393,690 1380,673 1365,658 1350,647 1336,640"/><polygon points="1262,790 1268,780 1290,770 1306,762 1311,746 1322,733 1326,727 1332,729 1344,740 1350,741 1348,749 1342,757 1340,773 1330,790"/><polygon points="712,790 718,767 729,756 748,751 770,756 781,767 784,790"/><polygon points="857,790 870,775 887,764 905,775 920,790"/><polygon points="1054,790 1060,775 1066,767 1085,777 1099,784 1124,790"/><polygon points="1404,738 1412,741 1425,754 1440,771 1446,785 1438,787 1425,770 1410,752 1403,745"/><polygon points="887,418 905,420 909,432 897,434"/><polygon points="928,405 945,388 962,372 970,368 966,378 950,392 934,404"/><polygon points="1026,518 1031,513 1042,513 1045,519 1036,524"/><polygon points="1038,634 1055,626 1073,624 1068,636 1045,641"/><polygon points="1070,682 1075,672 1092,673 1095,684 1080,687"/><polygon points="699,470 707,467 713,472 710,484 700,485"/><polygon points="608,714 615,712 619,722 614,729 608,726"/><polygon points="667,556 680,540 697,522 703,517 700,528 685,548 672,560"/></g>
<polyline points="1425,582 1431,600 1431,620 1437,635 1441,650 1453,670 1459,686 1465,704 1471,720 1477,737 1484,750 1491,761 1500,771" fill="none" stroke="#7fd8e0" stroke-width="2" opacity="0.8"/>
<polyline points="1294,538 1330,560 1370,578 1400,590 1425,600 1460,607 1500,617" fill="none" stroke="#e0e8f0" stroke-width="1.5" opacity="0.6"/>
<g fill="#1a4a80"><circle cx="1377" cy="703" r="3"/><circle cx="1398" cy="715" r="2"/><circle cx="1342" cy="667" r="1.8"/></g>
<g filter="url(#disp)"><g fill="none" stroke="#ec1020" stroke-width="3.4" stroke-linejoin="round"><polyline points="557,751 565,729 568,696 576,669 579,642 584,617 598,603 611,590 631,576 633,565 632,541 639,513 649,492 664,474 678,456 691,440 702,428 714,423 734,423 740,418 755,412 770,407 761,404 747,404 734,407 720,407 707,400 697,400 693,414 684,411 677,407 679,400 684,397 684,379 681,365 674,352 670,341 674,334 681,329 677,318 679,313 686,318 691,333 706,333 702,325 697,320 693,313 699,311 718,306 728,302 739,294 757,292 758,278 746,274 742,267 753,246 757,214 767,203 785,185 792,183 789,203 803,201 821,198 842,178 849,164 870,153 892,132 899,114 920,116 945,125 964,134 966,153 968,207 973,235 970,271 962,303 946,331 930,346 918,350 895,363 884,361 863,356 848,355 841,359 841,366 848,391 866,409 887,416 916,419 927,412 955,373 976,355 994,339 1005,352 1012,366 991,391 969,405 937,412 927,423 916,437 916,462 898,487 880,512 870,533 863,569 870,590 875,595 895,617 912,630 937,635 962,640 979,645 989,635 1009,620 1014,622 1024,630 1039,620 1054,600 1074,595 1094,592 1114,585 1135,578 1150,578 1171,570 1181,553 1190,543 1210,540 1231,536 1233,551 1214,561 1204,574 1198,594 1210,595 1221,591 1242,591"/><polyline points="712,767 718,767 729,756 748,751 770,756 781,767"/><polygon points="962,526 980,524 1012,501 1040,494 1086,487 1097,491 1083,498 1062,512 1054,533 1054,551 1033,562 998,569 976,565 973,547"/><polygon points="1122,483 1136,476 1143,469 1161,476 1154,483 1133,485"/><polygon points="840,426 852,422 863,424 867,431 860,440 840,465 812,497 785,524 757,552 740,577 725,599 716,603 711,600 715,585 728,562 743,539 760,510 780,483 800,458 826,432"/><polygon points="620,612 634,610 637,625 630,640 636,650 622,655 610,648 612,630"/><polygon points="601,691 615,672 640,655 653,650 650,658 630,675 608,693"/><polygon points="612,751 618,735 622,718 640,700 650,691 648,705 636,725 630,745"/><polygon points="650,572 652,562 664,558 667,566 660,574"/><polygon points="710,601 720,585 735,568 743,563 741,575 728,590 714,603"/><polygon points="854,667 866,664 877,668 876,676 862,677"/><polygon points="964,686 980,676 999,674 992,684 970,690"/><polygon points="890,764 905,748 925,742 932,750 915,760"/><polygon points="1081,757 1084,742 1094,737 1096,750 1088,759"/><polygon points="1154,595 1156,601 1200,603 1198,594"/><polygon points="887,418 905,420 909,432 897,434"/><polygon points="928,405 945,388 962,372 970,368 966,378 950,392 934,404"/><polygon points="1026,518 1031,513 1042,513 1045,519 1036,524"/><polygon points="1038,634 1055,626 1073,624 1068,636 1045,641"/><polygon points="1070,682 1075,672 1092,673 1095,684 1080,687"/><polygon points="699,470 707,467 713,472 710,484 700,485"/><polygon points="608,714 615,712 619,722 614,729 608,726"/><polygon points="667,556 680,540 697,522 703,517 700,528 685,548 672,560"/></g>
<g fill="#ec1020"><ellipse cx="892" cy="263" rx="5" ry="5" transform="rotate(0 892 263)"/><ellipse cx="929" cy="270" rx="8" ry="4" transform="rotate(0 929 270)"/><ellipse cx="906" cy="295" rx="7" ry="4" transform="rotate(0 906 295)"/><ellipse cx="955" cy="280" rx="8" ry="4" transform="rotate(0 955 280)"/><ellipse cx="962" cy="258" rx="4" ry="6" transform="rotate(0 962 258)"/><ellipse cx="905" cy="318" rx="5" ry="4" transform="rotate(0 905 318)"/><ellipse cx="925" cy="700" rx="5" ry="4" transform="rotate(20 925 700)"/><ellipse cx="940" cy="712" rx="6" ry="4" transform="rotate(-20 940 712)"/><ellipse cx="955" cy="720" rx="4" ry="5" transform="rotate(0 955 720)"/><ellipse cx="965" cy="705" rx="4" ry="3" transform="rotate(0 965 705)"/><ellipse cx="930" cy="725" rx="3" ry="3" transform="rotate(0 930 725)"/><ellipse cx="968" cy="760" rx="7" ry="4" transform="rotate(-20 968 760)"/><ellipse cx="978" cy="748" rx="4" ry="3" transform="rotate(0 978 748)"/><ellipse cx="948" cy="680" rx="3" ry="3" transform="rotate(0 948 680)"/><ellipse cx="995" cy="700" rx="4" ry="3" transform="rotate(0 995 700)"/><ellipse cx="1005" cy="672" rx="10" ry="3" transform="rotate(-20 1005 672)"/><ellipse cx="1020" cy="700" rx="4" ry="4" transform="rotate(0 1020 700)"/><ellipse cx="985" cy="730" rx="3" ry="3" transform="rotate(0 985 730)"/><ellipse cx="1030" cy="720" rx="5" ry="3" transform="rotate(0 1030 720)"/><ellipse cx="912" cy="690" rx="3" ry="3" transform="rotate(0 912 690)"/><ellipse cx="900" cy="630" rx="3" ry="3" transform="rotate(0 900 630)"/><ellipse cx="890" cy="625" rx="3" ry="3" transform="rotate(0 890 625)"/><ellipse cx="957" cy="645" rx="3" ry="2" transform="rotate(0 957 645)"/><ellipse cx="990" cy="650" rx="3" ry="3" transform="rotate(0 990 650)"/><ellipse cx="1090" cy="613" rx="17" ry="7" transform="rotate(0 1090 613)"/><ellipse cx="1148" cy="620" rx="18" ry="12" transform="rotate(15 1148 620)"/><ellipse cx="1062" cy="603" rx="12" ry="5" transform="rotate(-10 1062 603)"/><ellipse cx="1115" cy="597" rx="14" ry="6" transform="rotate(-10 1115 597)"/><ellipse cx="1160" cy="590" rx="12" ry="5" transform="rotate(-15 1160 590)"/><ellipse cx="1175" cy="600" rx="6" ry="4" transform="rotate(0 1175 600)"/><ellipse cx="1100" cy="625" rx="5" ry="4" transform="rotate(0 1100 625)"/><ellipse cx="1040" cy="612" rx="6" ry="4" transform="rotate(0 1040 612)"/><ellipse cx="664" cy="607" rx="3" ry="9" transform="rotate(35 664 607)"/><ellipse cx="677" cy="612" rx="2" ry="6" transform="rotate(35 677 612)"/><ellipse cx="658" cy="655" rx="3" ry="5" transform="rotate(0 658 655)"/><ellipse cx="680" cy="652" rx="6" ry="3" transform="rotate(0 680 652)"/><ellipse cx="617" cy="693" rx="10" ry="4" transform="rotate(10 617 693)"/><ellipse cx="653" cy="751" rx="2" ry="9" transform="rotate(30 653 751)"/><ellipse cx="575" cy="690" rx="4" ry="6" transform="rotate(0 575 690)"/><ellipse cx="570" cy="715" rx="3" ry="6" transform="rotate(0 570 715)"/><ellipse cx="580" cy="665" rx="3" ry="5" transform="rotate(0 580 665)"/><ellipse cx="643" cy="593" rx="5" ry="6" transform="rotate(0 643 593)"/><ellipse cx="906" cy="181" rx="10" ry="11" transform="rotate(0 906 181)"/><ellipse cx="905" cy="194" rx="5" ry="8" transform="rotate(0 905 194)"/><ellipse cx="880" cy="215" rx="5" ry="6" transform="rotate(0 880 215)"/><ellipse cx="952" cy="206" rx="17" ry="6" transform="rotate(5 952 206)"/><ellipse cx="831" cy="225" rx="9" ry="14" transform="rotate(20 831 225)"/><ellipse cx="926" cy="173" rx="4" ry="4" transform="rotate(0 926 173)"/><ellipse cx="948" cy="160" rx="5" ry="5" transform="rotate(0 948 160)"/><ellipse cx="886" cy="158" rx="4" ry="4" transform="rotate(0 886 158)"/><ellipse cx="919" cy="152" rx="4" ry="3" transform="rotate(0 919 152)"/><ellipse cx="966" cy="232" rx="5" ry="10" transform="rotate(0 966 232)"/><ellipse cx="922" cy="265" rx="5" ry="4" transform="rotate(0 922 265)"/><ellipse cx="935" cy="270" rx="5" ry="6" transform="rotate(0 935 270)"/><ellipse cx="960" cy="275" rx="5" ry="5" transform="rotate(0 960 275)"/><ellipse cx="900" cy="280" rx="5" ry="4" transform="rotate(0 900 280)"/><ellipse cx="878" cy="290" rx="4" ry="4" transform="rotate(0 878 290)"/><ellipse cx="895" cy="325" rx="4" ry="6" transform="rotate(0 895 325)"/><ellipse cx="862" cy="342" rx="4" ry="4" transform="rotate(0 862 342)"/><ellipse cx="815" cy="310" rx="4" ry="6" transform="rotate(0 815 310)"/><ellipse cx="795" cy="300" rx="3" ry="5" transform="rotate(0 795 300)"/><ellipse cx="870" cy="240" rx="3" ry="3" transform="rotate(0 870 240)"/><ellipse cx="724" cy="350" rx="4" ry="3" transform="rotate(0 724 350)"/><ellipse cx="760" cy="326" rx="3" ry="3" transform="rotate(0 760 326)"/><ellipse cx="770" cy="345" rx="4" ry="3" transform="rotate(0 770 345)"/><ellipse cx="690" cy="367" rx="5" ry="3" transform="rotate(0 690 367)"/><ellipse cx="737" cy="300" rx="3" ry="2" transform="rotate(0 737 300)"/><ellipse cx="718" cy="312" rx="3" ry="2" transform="rotate(0 718 312)"/><ellipse cx="832" cy="290" rx="3" ry="3" transform="rotate(0 832 290)"/><ellipse cx="840" cy="320" rx="3" ry="3" transform="rotate(0 840 320)"/><ellipse cx="848" cy="365" rx="3" ry="3" transform="rotate(0 848 365)"/><ellipse cx="852" cy="380" rx="3" ry="3" transform="rotate(0 852 380)"/><ellipse cx="858" cy="395" rx="3" ry="3" transform="rotate(0 858 395)"/><ellipse cx="866" cy="400" rx="3" ry="3" transform="rotate(0 866 400)"/><ellipse cx="877" cy="355" rx="5" ry="3" transform="rotate(0 877 355)"/><ellipse cx="867" cy="470" rx="3" ry="3" transform="rotate(0 867 470)"/><ellipse cx="864" cy="500" rx="3" ry="3" transform="rotate(0 864 500)"/><ellipse cx="873" cy="540" rx="5" ry="5" transform="rotate(0 873 540)"/><ellipse cx="868" cy="575" rx="4" ry="4" transform="rotate(0 868 575)"/><ellipse cx="863" cy="600" rx="4" ry="3" transform="rotate(0 863 600)"/><ellipse cx="885" cy="598" rx="4" ry="4" transform="rotate(0 885 598)"/><ellipse cx="880" cy="615" rx="3" ry="3" transform="rotate(0 880 615)"/><ellipse cx="800" cy="474" rx="6" ry="3" transform="rotate(-40 800 474)"/><ellipse cx="757" cy="530" rx="3" ry="8" transform="rotate(30 757 530)"/><ellipse cx="718" cy="487" rx="4" ry="8" transform="rotate(30 718 487)"/><ellipse cx="713" cy="520" rx="5" ry="3" transform="rotate(0 713 520)"/><ellipse cx="736" cy="551" rx="3" ry="7" transform="rotate(30 736 551)"/><ellipse cx="730" cy="575" rx="3" ry="6" transform="rotate(30 730 575)"/><ellipse cx="694" cy="568" rx="4" ry="10" transform="rotate(30 694 568)"/><ellipse cx="672" cy="510" rx="4" ry="8" transform="rotate(20 672 510)"/><ellipse cx="700" cy="545" rx="4" ry="3" transform="rotate(0 700 545)"/><ellipse cx="645" cy="620" rx="3" ry="3" transform="rotate(0 645 620)"/><ellipse cx="660" cy="690" rx="4" ry="3" transform="rotate(0 660 690)"/><ellipse cx="670" cy="580" rx="3" ry="3" transform="rotate(0 670 580)"/><ellipse cx="685" cy="660" rx="5" ry="3" transform="rotate(0 685 660)"/><ellipse cx="660" cy="735" rx="5" ry="8" transform="rotate(30 660 735)"/><ellipse cx="650" cy="740" rx="3" ry="3" transform="rotate(0 650 740)"/><ellipse cx="674" cy="700" rx="3" ry="3" transform="rotate(0 674 700)"/><ellipse cx="818" cy="626" rx="4" ry="3" transform="rotate(0 818 626)"/><ellipse cx="882" cy="652" rx="3" ry="3" transform="rotate(0 882 652)"/><ellipse cx="905" cy="660" rx="3" ry="3" transform="rotate(0 905 660)"/><ellipse cx="916" cy="640" rx="5" ry="4" transform="rotate(0 916 640)"/><ellipse cx="950" cy="655" rx="4" ry="3" transform="rotate(0 950 655)"/><ellipse cx="930" cy="620" rx="3" ry="3" transform="rotate(0 930 620)"/><ellipse cx="945" cy="615" rx="3" ry="3" transform="rotate(0 945 615)"/><ellipse cx="970" cy="630" rx="3" ry="3" transform="rotate(0 970 630)"/><ellipse cx="950" cy="690" rx="5" ry="4" transform="rotate(0 950 690)"/><ellipse cx="968" cy="720" rx="3" ry="3" transform="rotate(0 968 720)"/><ellipse cx="978" cy="741" rx="6" ry="5" transform="rotate(0 978 741)"/><ellipse cx="1010" cy="742" rx="5" ry="5" transform="rotate(0 1010 742)"/><ellipse cx="1035" cy="748" rx="4" ry="4" transform="rotate(0 1035 748)"/><ellipse cx="897" cy="745" rx="3" ry="3" transform="rotate(0 897 745)"/><ellipse cx="935" cy="735" rx="3" ry="3" transform="rotate(0 935 735)"/><ellipse cx="1090" cy="605" rx="25" ry="6" transform="rotate(-5 1090 605)"/><ellipse cx="1125" cy="598" rx="12" ry="5" transform="rotate(-10 1125 598)"/><ellipse cx="1060" cy="604" rx="10" ry="5" transform="rotate(-15 1060 604)"/><ellipse cx="1150" cy="622" rx="14" ry="14" transform="rotate(10 1150 622)"/><ellipse cx="1140" cy="612" rx="8" ry="6" transform="rotate(0 1140 612)"/><ellipse cx="1125" cy="648" rx="5" ry="11" transform="rotate(30 1125 648)"/><ellipse cx="1177" cy="610" rx="12" ry="3" transform="rotate(8 1177 610)"/><ellipse cx="1208" cy="624" rx="16" ry="3" transform="rotate(15 1208 624)"/><ellipse cx="1190" cy="634" rx="4" ry="4" transform="rotate(0 1190 634)"/><ellipse cx="1070" cy="648" rx="6" ry="4" transform="rotate(-30 1070 648)"/><ellipse cx="1085" cy="659" rx="4" ry="3" transform="rotate(0 1085 659)"/><ellipse cx="1150" cy="676" rx="4" ry="18" transform="rotate(45 1150 676)"/><ellipse cx="1198" cy="678" rx="5" ry="3" transform="rotate(0 1198 678)"/><ellipse cx="1002" cy="665" rx="12" ry="3" transform="rotate(-25 1002 665)"/><ellipse cx="1000" cy="700" rx="4" ry="3" transform="rotate(0 1000 700)"/><ellipse cx="1010" cy="690" rx="3" ry="4" transform="rotate(0 1010 690)"/><ellipse cx="1045" cy="698" rx="3" ry="3" transform="rotate(0 1045 698)"/><ellipse cx="1063" cy="690" rx="2" ry="10" transform="rotate(0 1063 690)"/><ellipse cx="1180" cy="640" rx="4" ry="3" transform="rotate(0 1180 640)"/><ellipse cx="1240" cy="612" rx="4" ry="3" transform="rotate(0 1240 612)"/><ellipse cx="1000" cy="600" rx="5" ry="3" transform="rotate(0 1000 600)"/><ellipse cx="1020" cy="612" rx="4" ry="3" transform="rotate(0 1020 612)"/><ellipse cx="1076" cy="720" rx="4" ry="6" transform="rotate(0 1076 720)"/><ellipse cx="1120" cy="720" rx="3" ry="3" transform="rotate(0 1120 720)"/><ellipse cx="1160" cy="700" rx="3" ry="3" transform="rotate(0 1160 700)"/><ellipse cx="1230" cy="690" rx="3" ry="3" transform="rotate(0 1230 690)"/><ellipse cx="1090" cy="700" rx="3" ry="3" transform="rotate(0 1090 700)"/><circle cx="572.4" cy="684.0" r="3.1"/><circle cx="574.7" cy="674.0" r="1.9"/><circle cx="577.5" cy="667.8" r="2.0"/><circle cx="578.1" cy="651.7" r="1.7"/><circle cx="578.0" cy="644.6" r="1.9"/><circle cx="584.4" cy="616.6" r="2.4"/><circle cx="613.5" cy="586.2" r="1.8"/><circle cx="627.6" cy="578.3" r="1.5"/><circle cx="632.1" cy="566.9" r="2.3"/><circle cx="632.8" cy="542.3" r="1.5"/><circle cx="634.1" cy="532.2" r="2.1"/><circle cx="633.8" cy="530.7" r="3.1"/><circle cx="646.6" cy="497.6" r="2.4"/><circle cx="677.1" cy="456.8" r="1.7"/><circle cx="689.9" cy="440.1" r="2.4"/><circle cx="692.4" cy="440.6" r="1.8"/><circle cx="702.7" cy="427.5" r="3.2"/><circle cx="719.8" cy="422.8" r="2.9"/><circle cx="733.1" cy="424.0" r="1.6"/><circle cx="751.4" cy="414.5" r="3.1"/><circle cx="762.6" cy="409.2" r="1.8"/><circle cx="683.6" cy="394.8" r="1.7"/><circle cx="674.5" cy="352.1" r="2.0"/><circle cx="678.4" cy="320.8" r="2.8"/><circle cx="701.5" cy="333.8" r="2.0"/><circle cx="717.7" cy="304.7" r="2.6"/><circle cx="736.3" cy="297.1" r="2.3"/><circle cx="754.8" cy="291.9" r="2.8"/><circle cx="765.3" cy="205.4" r="3.1"/><circle cx="791.3" cy="190.6" r="2.5"/><circle cx="822.6" cy="196.1" r="2.2"/><circle cx="844.0" cy="170.3" r="1.9"/><circle cx="849.5" cy="162.9" r="1.8"/><circle cx="865.1" cy="156.3" r="2.5"/><circle cx="872.7" cy="149.0" r="2.0"/><circle cx="883.7" cy="138.9" r="2.5"/><circle cx="895.0" cy="126.5" r="3.1"/><circle cx="911.2" cy="116.5" r="2.5"/><circle cx="952.3" cy="129.2" r="1.5"/><circle cx="964.3" cy="139.8" r="3.0"/><circle cx="964.9" cy="147.7" r="3.2"/><circle cx="966.7" cy="179.3" r="2.3"/><circle cx="968.2" cy="202.1" r="1.7"/><circle cx="967.8" cy="214.4" r="2.9"/><circle cx="970.5" cy="224.4" r="2.8"/><circle cx="973.3" cy="234.8" r="2.0"/><circle cx="970.3" cy="268.4" r="2.0"/><circle cx="968.2" cy="277.4" r="2.3"/><circle cx="965.2" cy="296.2" r="2.3"/><circle cx="952.7" cy="320.2" r="2.2"/><circle cx="924.4" cy="347.0" r="2.9"/><circle cx="896.7" cy="361.3" r="2.7"/><circle cx="868.5" cy="356.8" r="2.4"/><circle cx="852.9" cy="354.6" r="2.9"/><circle cx="865.0" cy="407.1" r="3.2"/><circle cx="875.3" cy="413.3" r="1.9"/><circle cx="888.8" cy="416.6" r="3.1"/><circle cx="896.9" cy="416.0" r="2.6"/><circle cx="907.3" cy="418.8" r="1.6"/><circle cx="929.7" cy="408.6" r="2.0"/><circle cx="937.5" cy="396.4" r="2.7"/><circle cx="973.6" cy="357.7" r="1.9"/><circle cx="978.8" cy="352.2" r="2.1"/><circle cx="1008.6" cy="361.6" r="1.7"/><circle cx="1005.3" cy="374.2" r="2.3"/><circle cx="998.9" cy="381.7" r="1.6"/><circle cx="990.2" cy="392.8" r="3.2"/><circle cx="972.3" cy="401.9" r="2.1"/><circle cx="955.2" cy="408.7" r="1.7"/><circle cx="928.8" cy="421.6" r="2.4"/><circle cx="915.1" cy="436.8" r="1.6"/><circle cx="901.5" cy="482.4" r="3.0"/><circle cx="890.7" cy="496.3" r="1.8"/><circle cx="877.7" cy="514.0" r="2.0"/><circle cx="873.9" cy="527.2" r="1.6"/><circle cx="869.4" cy="587.2" r="2.0"/><circle cx="875.5" cy="595.2" r="1.5"/><circle cx="887.6" cy="609.4" r="2.1"/><circle cx="892.2" cy="614.3" r="2.7"/><circle cx="935.4" cy="635.8" r="1.5"/><circle cx="939.0" cy="635.2" r="2.4"/><circle cx="951.9" cy="637.7" r="1.6"/><circle cx="981.1" cy="641.2" r="1.6"/><circle cx="991.7" cy="630.6" r="2.0"/><circle cx="1019.2" cy="624.8" r="2.2"/><circle cx="1026.1" cy="629.8" r="2.4"/><circle cx="1039.1" cy="620.0" r="2.4"/><circle cx="1052.4" cy="603.2" r="2.7"/><circle cx="1061.1" cy="597.4" r="1.9"/><circle cx="1071.2" cy="594.5" r="2.9"/><circle cx="1076.2" cy="594.9" r="1.6"/><circle cx="1083.3" cy="592.5" r="2.7"/><circle cx="1097.5" cy="590.1" r="1.7"/><circle cx="1176.4" cy="563.7" r="2.6"/><circle cx="1187.2" cy="543.6" r="2.2"/><circle cx="1192.0" cy="541.3" r="2.6"/><circle cx="1220.6" cy="539.0" r="1.7"/><circle cx="1218.9" cy="556.7" r="2.1"/><circle cx="1205.0" cy="594.4" r="1.8"/><circle cx="1234.7" cy="590.8" r="3.1"/></g></g>
</svg></div><div class="a" style="left:0;top:790px;width:1500px;height:23px;background:#f0f0f0"></div><div class="a" style="left:3px;top:793px;width:156px;height:17px;background:#fff;border:1px solid #c4c4c4;border-radius:2px"></div><svg class="ic" style="left:9px;top:796px" width="11" height="11"><circle cx="4.5" cy="4.5" r="3.3" fill="none" stroke="#888" stroke-width="1.1"/><path d="M7 7l3 3" stroke="#888" stroke-width="1.3"/></svg><span class="t" style="left:25px;top:797px;color:#777;font-size:8.9px">Type to locate (Ctrl+K)</span><span class="t" style="left:870px;top:797px">Coordinate</span><div class="a" style="left:915px;top:793px;width:73px;height:17px;background:#fff;border:1px solid #c4c4c4"></div><span class="t" style="left:920px;top:797px">407624,5441151</span><svg class="ic" style="left:993px;top:794px" width="14" height="15"><path d="M3 2l4 5 4-5M7 7v6M3 13h8" stroke="#444" stroke-width="1.3" fill="none"/><circle cx="10" cy="10" r="3" fill="none" stroke="#444"/></svg><span class="t" style="left:1016px;top:797px">Scale</span><div class="a" style="left:1040px;top:793px;width:61px;height:17px;background:#fff;border:1px solid #c4c4c4"></div><span class="t" style="left:1043px;top:797px">1:58121</span><div class="a" style="left:1085px;top:794px;width:1px;height:15px;background:#ddd"></div><svg class="ic" style="left:1089px;top:799px" width="8" height="5"><path d="M.5 .5h7l-3.5 4z" fill="#555"/></svg><svg class="ic" style="left:1110px;top:795px" width="11" height="13"><rect x="1" y="5" width="9" height="7" rx="1" fill="#666"/><path d="M3 5V3.5a2.5 2.5 0 0 1 5 0V5" stroke="#666" stroke-width="1.4" fill="none"/></svg><span class="t" style="left:1127px;top:797px">Magnifier</span><div class="a" style="left:1166px;top:793px;width:68px;height:17px;background:#fff;border:1px solid #c4c4c4"></div><span class="t" style="left:1169px;top:797px">100%</span><div class="a" style="left:1222px;top:794px;width:1px;height:15px;background:#ddd"></div><svg class="ic" style="left:1224px;top:795px" width="8" height="13"><path d="M1 5l3-3.5 3 3.5M1 8l3 3.5 3-3.5" stroke="#444" fill="none" stroke-width="1.2"/></svg><span class="t" style="left:1240px;top:797px">Rotation</span><div class="a" style="left:1279px;top:793px;width:67px;height:17px;background:#fff;border:1px solid #c4c4c4"></div><span class="t" style="left:1283px;top:797px">0.0 °</span><div class="a" style="left:1334px;top:794px;width:1px;height:15px;background:#ddd"></div><svg class="ic" style="left:1336px;top:795px" width="8" height="13"><path d="M1 5l3-3.5 3 3.5M1 8l3 3.5 3-3.5" stroke="#444" fill="none" stroke-width="1.2"/></svg><div class="cb" style="left:1350px;top:796px"></div><svg class="ic" style="left:1351px;top:797px" width="9" height="9"><path d="M1 4.5l2.5 3L8 1" stroke="#111" stroke-width="1.5" fill="none"/></svg><span class="t" style="left:1364px;top:797px">Render</span><svg class="ic" style="left:1406px;top:795px" width="13" height="13"><circle cx="6.5" cy="6.5" r="5.5" fill="#999"/><path d="M2 5c2 1 3-1 5 0s2 3 4 2M3 9c2-1 4 1 6 0" stroke="#fff" fill="none" stroke-width=".8"/></svg><span class="t" style="left:1420px;top:797px">EPSG:32621</span><svg class="ic" style="left:1481px;top:795px" width="14" height="13"><path d="M1 1h12v8H6l-3 3V9H1z" fill="#777"/><path d="M3 4h8M3 6.5h6" stroke="#fff"/></svg><div id="taskbar" class="a"></div><svg class="ic" style="left:11px;top:821px" width="15" height="15"><path d="M0 2l6-.9V7H0zM7 1l8-1v7H7zM0 8h6v5.9L0 13zM7 8h8v7l-8-1z" fill="#fff"/></svg><div class="a" style="left:37px;top:813px;width:268px;height:31px;background:#363636;border-left:1px solid #555"></div><svg class="ic" style="left:47px;top:820px" width="15" height="16"><circle cx="9.5" cy="5.5" r="4.5" fill="none" stroke="#ddd" stroke-width="1.3"/><path d="M6.3 8.7L1 14" stroke="#ddd" stroke-width="1.4"/></svg><span class="t" style="left:69px;top:821px;font-size:11.3px;line-height:14px;color:#e8e8e8">Type here to search</span><div class="a" style="left:316px;top:820px;width:16px;height:16px;border:2px solid #fff;border-radius:50%"></div><svg class="ic" style="left:354px;top:820px" width="16" height="16"><rect x="2" y="3" width="9" height="9" fill="none" stroke="#fff" stroke-width="1.5"/><path d="M13 2v12M15 4v8M1 14h11M1 1h11" stroke="#fff" stroke-width="1.2"/></svg><svg class="ic" style="left:393px;top:819px" width="18" height="18"><ellipse cx="9" cy="9" rx="5" ry="7" fill="#bbb"/><ellipse cx="7" cy="8" rx="1.5" ry="1" fill="#222"/><ellipse cx="11" cy="8" rx="1.5" ry="1" fill="#222"/><path d="M1 9h3M14 9h3" stroke="#888"/></svg><svg class="ic" style="left:430px;top:818px" width="22" height="20"><ellipse cx="11" cy="9" rx="10" ry="7" fill="#e8c8d0" transform="rotate(-15 11 9)"/><path d="M6 8l4 3 6-5" stroke="#888" fill="none"/><circle cx="14" cy="15" r="3" fill="none" stroke="#3aa0e0" stroke-width="1.5"/></svg><svg class="ic" style="left:469px;top:819px" width="19" height="17"><path d="M0 2h7l2 2h10v12H0z" fill="#f2c230"/><rect x="3" y="8" width="13" height="5" fill="#4a9ae0"/><rect x="0" y="4" width="19" height="4" fill="#f8d860"/></svg><svg class="ic" style="left:507px;top:818px" width="19" height="19" viewBox="0 0 20 20"><circle cx="10" cy="10" r="9.5" fill="#db4437"/><path d="M10 10L18.2 5.3A9.5 9.5 0 0 1 10 19.5z" fill="#f4c20d"/><path d="M10 10V19.5A9.5 9.5 0 0 1 1.8 5.3z" fill="#0f9d58"/><circle cx="10" cy="10" r="4.5" fill="#fff"/><circle cx="10" cy="10" r="3.5" fill="#4285f4"/></svg><svg class="ic" style="left:545px;top:819px" width="19" height="18"><rect x="6" y="2" width="13" height="14" fill="#fff" stroke="#2b579a"/><path d="M9 5h8M9 8h8M9 11h8" stroke="#2b579a"/><rect x="0" y="1" width="11" height="16" fill="#2b579a"/><text x="1.5" y="13" font-size="10" font-weight="bold" fill="#fff" font-family="Liberation Sans">W</text></svg><div class="a" style="left:575px;top:813px;width:38px;height:31px;background:#4a4542"></div><svg class="ic" style="left:585px;top:819px" width="19" height="19"><circle cx="8.5" cy="8.5" r="6.5" fill="none" stroke="#8cc040" stroke-width="3"/><path d="M10 10l7 7" stroke="#8cc040" stroke-width="3"/><path d="M9 9l4 4" stroke="#f0a030" stroke-width="2"/></svg><svg class="ic" style="left:621px;top:818px" width="22" height="20"><ellipse cx="10" cy="11" rx="9" ry="7.5" fill="#f0e8e0"/><circle cx="6" cy="9" r="1.8" fill="#e04040"/><circle cx="10" cy="7" r="1.8" fill="#40a0e0"/><circle cx="7" cy="14" r="1.8" fill="#40c040"/><path d="M14 12l7-10" stroke="#c08040" stroke-width="2"/></svg><div class="a" style="left:463px;top:842px;width:31px;height:2px;background:#e0d8cc"></div><div class="a" style="left:501px;top:842px;width:31px;height:2px;background:#e0d8cc"></div><div class="a" style="left:540px;top:842px;width:31px;height:2px;background:#e0d8cc"></div><div class="a" style="left:576px;top:842px;width:36px;height:2px;background:#e0d8cc"></div><div class="a" style="left:616px;top:842px;width:31px;height:2px;background:#e0d8cc"></div><svg class="ic" style="left:1304px;top:824px" width="12" height="8"><path d="M1 7l5-5 5 5" stroke="#fff" stroke-width="1.2" fill="none"/></svg><svg class="ic" style="left:1321px;top:820px" width="17" height="16"><circle cx="6" cy="8" r="4.5" fill="#ddd"/><circle cx="10" cy="7" r="4" fill="#eee"/><circle cx="11.5" cy="11.5" r="4" fill="#d83030"/><path d="M10 10l3 3M13 10l-3 3" stroke="#fff" stroke-width="1"/></svg><svg class="ic" style="left:1342px;top:820px" width="14" height="14"><path d="M1 13a12 12 0 0 1 12-12M4 13a9 9 0 0 1 9-9M7 13a6 6 0 0 1 6-6" stroke="#ddd" fill="none" stroke-width="1.1"/><circle cx="12" cy="12" r="1.5" fill="#fff"/></svg><svg class="ic" style="left:1360px;top:821px" width="14" height="13"><path d="M1 4h3l4-3v11L4 9H1z" fill="none" stroke="#fff"/><path d="M9 4.5l4 4M13 4.5l-4 4" stroke="#fff"/></svg><span class="t" style="left:1380px;top:815px;color:#fff;font-size:9.8px">ENG</span><span class="t" style="left:1384px;top:829px;color:#fff;font-size:9.8px">US</span><span class="t" style="left:1411px;top:815px;color:#fff;font-size:9.8px">11:19 AM</span><span class="t" style="left:1408px;top:829px;color:#fff;font-size:9.8px">2019-11-06</span><svg class="ic" style="left:1466px;top:820px" width="20" height="18"><path d="M1 1h12v9H6l-3 3v-3H1z" fill="#fff"/><path d="M3 4h8M3 6.5h8" stroke="#222"/><circle cx="13" cy="12" r="5" fill="#222" stroke="#fff"/><text x="11.5" y="15" font-size="7" fill="#fff" font-family="Liberation Sans">1</text></svg><div class="a" style="left:1497px;top:812px;width:1px;height:32px;background:#555"></div></body></html>
